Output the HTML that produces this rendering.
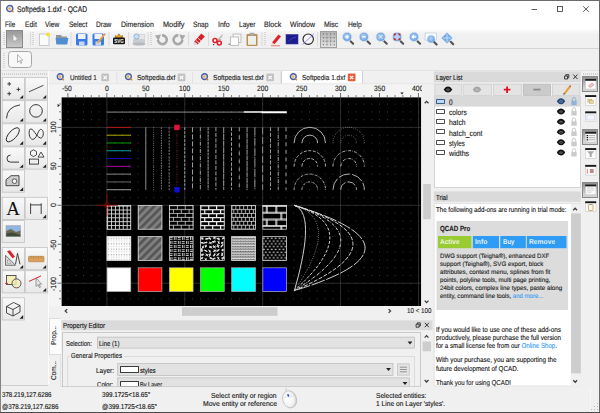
<!DOCTYPE html>
<html><head><meta charset="utf-8"><title>Softpedia 1.dxf - QCAD</title>
<style>
html,body{margin:0;padding:0;background:#f0f0f0;}
body{width:600px;height:413px;overflow:hidden;position:relative;font-family:"Liberation Sans", sans-serif;}
#app{position:absolute;left:0;top:0;width:600px;height:413px;overflow:hidden;}
#app div, #app svg{position:absolute;box-sizing:border-box;}
#app .t{white-space:nowrap;line-height:1;font-family:"Liberation Sans", sans-serif;transform-origin:0 0;text-rendering:geometricPrecision;-webkit-text-stroke:0.12px currentColor;}
#app .b{font-weight:bold;}
#app .r{position:static;}
</style></head><body><div id="app">
<div style="left:0px;top:0px;width:600px;height:413px;background:#f0f0f0"></div>
<div style="left:0px;top:0px;width:600px;height:29px;background:#fff"></div>
<svg style="left:5px;top:4px;" width="10" height="10" viewBox="-0.8 -0.6 10 10"><g transform="scale(0.86)"><circle cx="4.6" cy="4.6" r="3.6" fill="#e4e9f4" stroke="#4a5fa8" stroke-width="1.6"/><circle cx="4.3" cy="4.4" r="1.4" fill="#e8b030"/><path d="M6.5 6.5 L9 9" stroke="#d08a20" stroke-width="1.6"/></g></svg>
<div class="t" style="left:17.1px;top:5.6px;font-size:8.2px;color:#111;transform:scaleX(0.818);">Softpedia 1.dxf - QCAD</div>
<svg style="left:530px;top:0px" width="70" height="18" viewBox="0 0 70 18"><path d="M1.5 9.5 H7" stroke="#333" stroke-width="0.8" fill="none"/><rect x="27.5" y="6.5" width="5" height="5" stroke="#333" stroke-width="0.8" fill="none"/><path d="M53.2 6.3 L58.8 11.9 M58.8 6.3 L53.2 11.9" stroke="#333" stroke-width="0.8" fill="none"/></svg>
<div class="t" style="left:5.3px;top:20.6px;font-size:7.8px;color:#1a1a1a;transform:scaleX(0.811);">File</div>
<div class="t" style="left:24.5px;top:20.6px;font-size:7.8px;color:#1a1a1a;transform:scaleX(0.878);">Edit</div>
<div class="t" style="left:45.3px;top:20.6px;font-size:7.8px;color:#1a1a1a;transform:scaleX(0.847);">View</div>
<div class="t" style="left:68.8px;top:20.6px;font-size:7.8px;color:#1a1a1a;transform:scaleX(0.840);">Select</div>
<div class="t" style="left:96.2px;top:20.6px;font-size:7.8px;color:#1a1a1a;transform:scaleX(0.841);">Draw</div>
<div class="t" style="left:120.7px;top:20.6px;font-size:7.8px;color:#1a1a1a;transform:scaleX(0.890);">Dimension</div>
<div class="t" style="left:163px;top:20.6px;font-size:7.8px;color:#1a1a1a;transform:scaleX(0.936);">Modify</div>
<div class="t" style="left:193px;top:20.6px;font-size:7.8px;color:#1a1a1a;transform:scaleX(0.851);">Snap</div>
<div class="t" style="left:217.7px;top:20.6px;font-size:7.8px;color:#1a1a1a;transform:scaleX(0.891);">Info</div>
<div class="t" style="left:239px;top:20.6px;font-size:7.8px;color:#1a1a1a;transform:scaleX(0.845);">Layer</div>
<div class="t" style="left:264px;top:20.6px;font-size:7.8px;color:#1a1a1a;transform:scaleX(0.907);">Block</div>
<div class="t" style="left:290px;top:20.6px;font-size:7.8px;color:#1a1a1a;transform:scaleX(0.901);">Window</div>
<div class="t" style="left:324px;top:20.6px;font-size:7.8px;color:#1a1a1a;transform:scaleX(0.892);">Misc</div>
<div class="t" style="left:347.7px;top:20.6px;font-size:7.8px;color:#1a1a1a;transform:scaleX(0.860);">Help</div>
<div style="left:0px;top:28.6px;width:600px;height:20.4px;background:linear-gradient(#ffffff,#f6f6f6 12%,#f0f0f0 30%)"></div>
<div style="left:1px;top:48px;width:598px;height:1px;background:#d4d4d4"></div>
<div style="left:6px;top:30px;width:17px;height:18px;background:linear-gradient(#9a9a9a,#c9c9c9);border:0.5px solid #8a8a8a"></div>
<svg style="left:10px;top:33px" width="10" height="12" viewBox="0 0 10 12"><path d="M3 1 L3 9 L5 7.2 L6.3 10 L7.3 9.5 L6 6.8 L8.3 6.8 Z" fill="#f4f4f4" stroke="#999" stroke-width="0.6"/></svg>
<div style="left:3px;top:32px;width:2px;height:14px;background:repeating-linear-gradient(#cdcdcd 0 1px,transparent 1px 2px);opacity:.75"></div>
<div style="left:32px;top:32px;width:2px;height:14px;background:repeating-linear-gradient(#cdcdcd 0 1px,transparent 1px 2px);opacity:.75"></div>
<div style="left:150px;top:32px;width:2px;height:14px;background:repeating-linear-gradient(#cdcdcd 0 1px,transparent 1px 2px);opacity:.75"></div>
<div style="left:264px;top:32px;width:2px;height:14px;background:repeating-linear-gradient(#cdcdcd 0 1px,transparent 1px 2px);opacity:.75"></div>
<div style="left:30px;top:32px;width:1px;height:14px;background:#dadada"></div>
<svg style="left:70px;top:32px" width="2" height="14"><rect x="0.50" y="0.00" width="1.00" height="14.00" fill="#dadada"/></svg>
<svg style="left:108px;top:32px" width="2" height="14"><rect x="0.50" y="0.00" width="1.00" height="14.00" fill="#dadada"/></svg>
<div style="left:128px;top:32px;width:1px;height:14px;background:#dadada"></div>
<svg style="left:147px;top:32px" width="2" height="14"><rect x="0.50" y="0.00" width="1.00" height="14.00" fill="#dadada"/></svg>
<div style="left:188px;top:32px;width:1px;height:14px;background:#dadada"></div>
<div style="left:208px;top:32px;width:1px;height:14px;background:#dadada"></div>
<svg style="left:261px;top:32px" width="2" height="14"><rect x="0.50" y="0.00" width="1.00" height="14.00" fill="#dadada"/></svg>
<div style="left:317px;top:32px;width:1px;height:14px;background:#dadada"></div>
<svg style="left:38px;top:31px;" width="14" height="16" viewBox="0 0 14 16"><rect x="1.5" y="3" width="9.5" height="11.5" fill="#fbfbfb" stroke="#bdbdbd" stroke-width="0.8"/><circle cx="10" cy="3.5" r="2" fill="#f3e233"/></svg>
<svg style="left:54px;top:31px;" width="16" height="16" viewBox="0 0 16 16"><path d="M2 4 H7 L8 5.5 H13 V13 H2 Z" fill="#8f969e"/><path d="M1.5 7 H14.5 L13.2 13.6 H2.6 Z" fill="#4f8fd0"/></svg>
<svg style="left:74px;top:31px;" width="16" height="16" viewBox="0 0 16 16"><rect x="2" y="2.5" width="11.5" height="12" rx="1.5" fill="#3b7be8"/><rect x="4" y="3" width="7.5" height="5" fill="#eef3fb"/><rect x="5" y="10.5" width="5.5" height="4" fill="#c9d7ee"/></svg>
<svg style="left:91px;top:31px;" width="16" height="16" viewBox="0 0 16 16"><rect x="1.5" y="2.5" width="11.5" height="12" rx="1.5" fill="#3b7be8"/><rect x="3.5" y="3" width="7.5" height="5" fill="#eef3fb"/><rect x="4.5" y="10.5" width="5.5" height="4" fill="#c9d7ee"/><path d="M5.5 11.5 L12.5 3 L14 4.3 L7 12.5 Z" fill="#f0a93a"/><path d="M12.5 3 L14 4.3 L14.6 2.5 Z" fill="#e0503a"/></svg>
<svg style="left:111px;top:31px;" width="16" height="16" viewBox="0 0 16 16"><path d="M4.6 7.2 L4.2 4.6 L6 5.4 L7.9 2.8 L9.8 5.4 L11.6 4.6 L11.2 7.2 Z" fill="#f0a010" stroke="#6a4a08" stroke-width="0.5"/><rect x="2" y="6.6" width="12" height="6.6" rx="1.2" fill="#141414"/><text x="8" y="12" font-family="Liberation Sans, sans-serif" font-size="4.6" font-weight="bold" text-anchor="middle" fill="#f4f4f4">SVG</text></svg>
<svg style="left:130px;top:31px;" width="17" height="16" viewBox="0 0 17 16"><rect x="3" y="8" width="12" height="4.5" rx="1" fill="#c9ccd0"/><ellipse cx="9" cy="13" rx="6.5" ry="1.6" fill="#b5b8bd"/><rect x="8.5" y="3.5" width="6" height="5" fill="#e6e8ea" stroke="#c2c5c9" stroke-width="0.5"/><circle cx="6.5" cy="5.5" r="2.6" fill="#cfe0f3" stroke="#8fb3dc" stroke-width="1"/></svg>
<svg style="left:153px;top:31px;" width="17" height="16" viewBox="-0.8 0 17 16"><path d="M4.2 9 A4.4 4.4 0 1 0 8.2 4.4" fill="none" stroke="#a8a8a8" stroke-width="2.6"/><path d="M1.2 4.6 L7.2 3.4 L4.6 10 Z" fill="#a8a8a8"/></svg>
<svg style="left:170px;top:31px;" width="17" height="16" viewBox="-0.5 0 17 16"><path d="M11.8 9 A4.4 4.4 0 1 1 7.8 4.4" fill="none" stroke="#a8a8a8" stroke-width="2.6"/><path d="M14.8 4.6 L8.8 3.4 L11.4 10 Z" fill="#a8a8a8"/></svg>
<svg style="left:191px;top:31px;" width="16" height="16" viewBox="0 0 16 16"><path d="M3.2 10.8 L10.3 2.6 L13.8 5.5 L6.6 13.6 Z" fill="#d8222c"/><path d="M5 9.5 L8 12 M7 7.2 L10 9.8" stroke="#fff" stroke-width="0.7"/><path d="M3.5 11 L6.5 13.2 L3 14 Z" fill="#e9e9e9" stroke="#bbb" stroke-width="0.4"/></svg>
<svg style="left:210px;top:31px;" width="16" height="16" viewBox="0 0 16 16"><path d="M7 9 L13 2.5 L11.5 7 Z" fill="#b9bcc0"/><path d="M8 8 L11 9" stroke="#aaa" stroke-width="1.2"/><circle cx="5" cy="9.5" r="2" fill="none" stroke="#e0222c" stroke-width="1.6"/><circle cx="9.3" cy="12" r="2" fill="none" stroke="#e0222c" stroke-width="1.6"/><rect x="3" y="13" width="1.2" height="1.2" fill="#444"/></svg>
<svg style="left:227px;top:31px;" width="16" height="16" viewBox="0 0 16 16"><rect x="6" y="3" width="8" height="8.5" fill="#f4f4f4" stroke="#b4b4b4" stroke-width="0.8"/><rect x="3.5" y="6" width="8" height="8.5" fill="#fcfcfc" stroke="#b4b4b4" stroke-width="0.8"/><rect x="1.6" y="12.6" width="1.2" height="1.2" fill="#555"/></svg>
<svg style="left:244px;top:31px;" width="16" height="16" viewBox="0 0 16 16"><rect x="2.5" y="3" width="11" height="12" rx="1" fill="#b98f52"/><rect x="4" y="5" width="8" height="8.8" fill="#eeeeea"/><rect x="5.5" y="1.8" width="5" height="3" rx="0.8" fill="#a8a8a8"/></svg>
<svg style="left:268px;top:31px;" width="16" height="16" viewBox="0 0 16 16"><path d="M4 11.5 L10.5 3.5 L13 5.5 L6.5 13.2 Z" fill="#e0222c"/><path d="M4 11.5 L6.5 13.2 L3.2 14.2 Z" fill="#f3d9b0"/><path d="M3 14.8 H12" stroke="#e0222c" stroke-width="0.6"/></svg>
<svg style="left:284px;top:31px;" width="16" height="16" viewBox="0 0 16 16"><rect x="2" y="3.5" width="12" height="9.5" fill="#1c1c8c" stroke="#3a3aa8" stroke-width="0.6"/><path d="M4.5 10.5 Q8 6 12 6.2" stroke="#4a56c8" stroke-width="0.7" fill="none"/></svg>
<svg style="left:300px;top:31px;" width="16" height="16" viewBox="0 0 16 16"><circle cx="8.2" cy="8.2" r="5.2" fill="#f6f6f6" stroke="#222" stroke-width="1.1"/><path d="M2.5 13.5 L14 2.8" stroke="#6a6ae8" stroke-width="0.7"/></svg>
<div style="left:320.3px;top:30.8px;width:17px;height:17px;background:linear-gradient(#b4b4b4,#e2e2e2);border:0.5px solid #a0a0a0"></div>
<svg style="left:320px;top:31px;" width="17" height="17" viewBox="-0.6 -0.2 17 17"><rect x="2.3" y="2.3" width="1" height="1" fill="#555"/><rect x="2.3" y="5.9" width="1" height="1" fill="#555"/><rect x="2.3" y="9.5" width="1" height="1" fill="#555"/><rect x="2.3" y="13.100000000000001" width="1" height="1" fill="#555"/><rect x="5.9" y="2.3" width="1" height="1" fill="#555"/><rect x="5.9" y="5.9" width="1" height="1" fill="#555"/><rect x="5.9" y="9.5" width="1" height="1" fill="#555"/><rect x="5.9" y="13.100000000000001" width="1" height="1" fill="#555"/><rect x="9.5" y="2.3" width="1" height="1" fill="#555"/><rect x="9.5" y="5.9" width="1" height="1" fill="#555"/><rect x="9.5" y="9.5" width="1" height="1" fill="#555"/><rect x="9.5" y="13.100000000000001" width="1" height="1" fill="#555"/><rect x="13.100000000000001" y="2.3" width="1" height="1" fill="#555"/><rect x="13.100000000000001" y="5.9" width="1" height="1" fill="#555"/><rect x="13.100000000000001" y="9.5" width="1" height="1" fill="#555"/><rect x="13.100000000000001" y="13.100000000000001" width="1" height="1" fill="#555"/><path d="M2.8 6.4 H14 M2.8 10 H14 M6.4 2.8 V14 M10 2.8 V14" stroke="#999" stroke-width="0.4"/></svg>
<svg style="left:0;top:0" width="0" height="0"><defs><radialGradient id="lens" cx="0.45" cy="0.4" r="0.65"><stop offset="0" stop-color="#b4d2f4"/><stop offset="1" stop-color="#66a0e0"/></radialGradient></defs></svg>
<svg style="left:340px;top:31px;" width="17" height="16" viewBox="-0.6 0 17 16"><path d="M10 10.2 L12.6 12.7" stroke="#505050" stroke-width="2" stroke-linecap="round"/><circle cx="6.5" cy="5.9" r="4.1" fill="url(#lens)" stroke="#6a9cd8" stroke-width="0.6"/><circle cx="6.5" cy="5.9" r="4.7" fill="none" stroke="#d4e2f4" stroke-width="0.6"/><path d="M4.5 5.9 H8.5 M6.5 3.9 V7.9" stroke="#fff" stroke-width="1.2"/></svg>
<svg style="left:357px;top:31px;" width="17" height="16" viewBox="-0.4 0 17 16"><path d="M10 10.2 L12.6 12.7" stroke="#505050" stroke-width="2" stroke-linecap="round"/><circle cx="6.5" cy="5.9" r="4.1" fill="url(#lens)" stroke="#6a9cd8" stroke-width="0.6"/><circle cx="6.5" cy="5.9" r="4.7" fill="none" stroke="#d4e2f4" stroke-width="0.6"/><path d="M4.5 5.9 H8.5" stroke="#fff" stroke-width="1.2"/></svg>
<svg style="left:374px;top:31px;" width="17" height="16" viewBox="-0.2 0 17 16"><path d="M10 10.2 L12.6 12.7" stroke="#505050" stroke-width="2" stroke-linecap="round"/><circle cx="6.5" cy="5.9" r="4.1" fill="url(#lens)" stroke="#6a9cd8" stroke-width="0.6"/><circle cx="6.5" cy="5.9" r="4.7" fill="none" stroke="#d4e2f4" stroke-width="0.6"/><path d="M4.6 4 L8.4 7.8 M8.4 4 L4.6 7.8" stroke="#e4effc" stroke-width="0.9"/></svg>
<svg style="left:390px;top:31px;" width="17" height="16" viewBox="-0.6 0 17 16"><path d="M10 10.2 L12.6 12.7" stroke="#505050" stroke-width="2" stroke-linecap="round"/><circle cx="6.5" cy="5.9" r="4.1" fill="url(#lens)" stroke="#6a9cd8" stroke-width="0.6"/><circle cx="6.5" cy="5.9" r="4.7" fill="none" stroke="#d4e2f4" stroke-width="0.6"/><rect x="3.9" y="3.3" width="5.2" height="5.2" fill="#b4d2f4" stroke="#c8202a" stroke-width="1.5" stroke-dasharray="2.6 2.6" stroke-dashoffset="1.3"/></svg>
<svg style="left:407px;top:31px;" width="17" height="16" viewBox="-0.5 0 17 16"><path d="M10 10.2 L12.6 12.7" stroke="#505050" stroke-width="2" stroke-linecap="round"/><circle cx="6.5" cy="5.9" r="4.1" fill="url(#lens)" stroke="#6a9cd8" stroke-width="0.6"/><circle cx="6.5" cy="5.9" r="4.7" fill="none" stroke="#d4e2f4" stroke-width="0.6"/><path d="M4.4 5.9 H8.8 M4.4 5.9 L6.2 4.4 M4.4 5.9 L6.2 7.4" stroke="#fff" stroke-width="1.2" fill="none"/></svg>
<svg style="left:423px;top:31px;" width="19" height="16" viewBox="-0.6 0 19 16"><rect x="1.5" y="2" width="11.5" height="7" fill="#fcfcfc" stroke="#a9c1e6" stroke-width="0.6"/><path d="M10.5 11 L13 13.5" stroke="#555" stroke-width="2.2" stroke-linecap="round"/><circle cx="7.5" cy="8" r="3.8" fill="url(#lens)"/></svg>
<svg style="left:440px;top:31px;" width="18" height="16" viewBox="0 0 18 16"><path d="M10.8 10.8 L13.2 13.2" stroke="#555" stroke-width="2.2" stroke-linecap="round"/><path d="M7 1.4 L12.6 7 L7 12.6 L1.4 7 Z" fill="#74abe8"/><path d="M7 3 V11 M3 7 H11" stroke="#d6e6fa" stroke-width="0.8"/></svg>
<div style="left:3px;top:53px;width:2px;height:15px;background:repeating-linear-gradient(#cdcdcd 0 1px,transparent 1px 2px);opacity:.75"></div>
<div style="left:8px;top:51px;width:23.5px;height:17px;background:#f8f8f8;border:1px solid #a6a6a6;border-radius:3.5px"></div>
<svg style="left:14px;top:53px" width="11" height="13" viewBox="-0.5 -0.5 11 13"><path d="M3 1 L3 9 L5 7.2 L6.3 10 L7.3 9.5 L6 6.8 L8.3 6.8 Z" fill="#fdfdfd" stroke="#9a9a9a" stroke-width="0.7"/></svg>
<div style="left:1px;top:70px;width:47.8px;height:316.3px;background:#efefef;border-right:0.7px solid #fdfdfd;border-bottom:0.6px solid #cfcfcf"></div>
<div style="left:2px;top:73px;width:45px;height:2px;background:repeating-linear-gradient(90deg,#c8c8c8 0 1px,transparent 1px 2px);opacity:.8"></div>
<svg style="left:0;top:0" width="0" height="0"><defs><linearGradient id="tbg" x1="0" y1="0" x2="0" y2="1"><stop offset="0" stop-color="#f9f9f9"/><stop offset="1" stop-color="#e8e8e8"/></linearGradient></defs></svg>
<svg style="left:1px;top:77px;" width="24" height="24" viewBox="-0.8 -0.2 24 24"><g transform="translate(0.2 0.1)"><rect x="0.2" y="0.3" width="22.2" height="22.2" fill="url(#tbg)" stroke="#c2c2c2" stroke-width="0.8"/><path d="M5.300000000000001 6.6 H9.1 M7.2 4.699999999999999 V8.5" stroke="#222" stroke-width="0.85" fill="none"/><path d="M14.499999999999998 12.1 H18.299999999999997 M16.4 10.2 V14.0" stroke="#222" stroke-width="0.85" fill="none"/><path d="M5.300000000000001 16.4 H9.1 M7.2 14.499999999999998 V18.299999999999997" stroke="#222" stroke-width="0.85" fill="none"/><path d="M21.2 17.6 V21.2 H17.6 Z" fill="#222"/></g></svg>
<svg style="left:24px;top:77px;" width="24" height="24" viewBox="-0.8 -0.2 24 24"><g transform="translate(0.2 0.1)"><rect x="0.2" y="0.3" width="22.2" height="22.2" fill="url(#tbg)" stroke="#c2c2c2" stroke-width="0.8"/><path d="M4 14.5 L18.5 8" stroke="#222" stroke-width="0.8" fill="none"/><path d="M21.2 17.6 V21.2 H17.6 Z" fill="#222"/></g></svg>
<svg style="left:1px;top:100px;" width="24" height="24" viewBox="-0.8 -0.3 24 24"><g transform="translate(0.2 0.1)"><rect x="0.2" y="0.3" width="22.2" height="22.2" fill="url(#tbg)" stroke="#c2c2c2" stroke-width="0.8"/><path d="M4.5 18 Q5 6.5 18 4.5" stroke="#222" stroke-width="0.9" fill="none"/><path d="M21.2 17.6 V21.2 H17.6 Z" fill="#222"/></g></svg>
<svg style="left:24px;top:100px;" width="24" height="24" viewBox="-0.8 -0.3 24 24"><g transform="translate(0.2 0.1)"><rect x="0.2" y="0.3" width="22.2" height="22.2" fill="url(#tbg)" stroke="#c2c2c2" stroke-width="0.8"/><circle cx="11" cy="10.5" r="6.3" stroke="#222" stroke-width="0.9" fill="none"/><path d="M21.2 17.6 V21.2 H17.6 Z" fill="#222"/></g></svg>
<svg style="left:1px;top:123px;" width="24" height="24" viewBox="-0.8 -0.4 24 24"><g transform="translate(0.2 0.1)"><rect x="0.2" y="0.3" width="22.2" height="22.2" fill="url(#tbg)" stroke="#c2c2c2" stroke-width="0.8"/><ellipse cx="10.8" cy="11.3" rx="8.8" ry="3.9" transform="rotate(-48 10.8 11.3)" stroke="#222" stroke-width="0.9" fill="none"/><path d="M21.2 17.6 V21.2 H17.6 Z" fill="#222"/></g></svg>
<svg style="left:24px;top:123px;" width="24" height="24" viewBox="-0.8 -0.4 24 24"><g transform="translate(0.2 0.1)"><rect x="0.2" y="0.3" width="22.2" height="22.2" fill="url(#tbg)" stroke="#c2c2c2" stroke-width="0.8"/><path d="M4.6 6 C3 11 5.5 17.5 9 15.5 C12.5 13.5 13.5 4.5 16.5 6 C19.5 7.5 18.5 15 15.5 14.5 C11 13.5 8 3 4.6 6 Z" stroke="#222" stroke-width="0.9" fill="none"/><path d="M21.2 17.6 V21.2 H17.6 Z" fill="#222"/></g></svg>
<svg style="left:1px;top:146px;" width="24" height="24" viewBox="-0.8 -0.5 24 24"><g transform="translate(0.2 0.1)"><rect x="0.2" y="0.3" width="22.2" height="22.2" fill="url(#tbg)" stroke="#c2c2c2" stroke-width="0.8"/><path d="M17 15.5 H8.5 Q5 15.5 5 12 Q5 8.5 8.5 8.5" stroke="#222" stroke-width="0.9" fill="none"/><path d="M21.2 17.6 V21.2 H17.6 Z" fill="#222"/></g></svg>
<svg style="left:24px;top:146px;" width="24" height="24" viewBox="-0.8 -0.5 24 24"><g transform="translate(0.2 0.1)"><rect x="0.2" y="0.3" width="22.2" height="22.2" fill="url(#tbg)" stroke="#c2c2c2" stroke-width="0.8"/><path d="M5.5 5 L8.5 3.2 L11.5 5 V8.2 L8.5 10 L5.5 8.2 Z M13 10.5 L16 5.5 L19 10.5 Z" stroke="#222" stroke-width="0.8" fill="none"/><rect x="4.5" y="12.5" width="9" height="5" stroke="#222" stroke-width="0.8" fill="none"/><path d="M21.2 17.6 V21.2 H17.6 Z" fill="#222"/></g></svg>
<svg style="left:1px;top:169px;" width="24" height="24" viewBox="-0.8 -0.6 24 24"><g transform="translate(0.2 0.1)"><rect x="0.2" y="0.3" width="22.2" height="22.2" fill="url(#tbg)" stroke="#c2c2c2" stroke-width="0.8"/><path d="M4 16 V10 L9 6 H17 V16 Z" stroke="#222" stroke-width="0.8" fill="#d4d4d4"/><path d="M4.5 12 L9.5 7 M4.5 15 L12 7.5 M7 16 L15 8 M10 16 L17 9 M13 16 L17 12" stroke="#8a8a8a" stroke-width="0.4"/><circle cx="12.5" cy="11.5" r="2.3" fill="#f6f6f6" stroke="#222" stroke-width="0.7"/><path d="M21.2 17.6 V21.2 H17.6 Z" fill="#222"/></g></svg>
<svg style="left:1px;top:196px;" width="24" height="24" viewBox="-0.8 -0.9 24 24"><g transform="translate(0.2 0.1)"><rect x="0.2" y="0.3" width="22.2" height="22.2" fill="url(#tbg)" stroke="#c2c2c2" stroke-width="0.8"/><text x="11.2" y="18" font-family="Liberation Serif, serif" font-size="19" text-anchor="middle" fill="#111">A</text></g></svg>
<svg style="left:24px;top:196px;" width="24" height="24" viewBox="-0.8 -0.9 24 24"><g transform="translate(0.2 0.1)"><rect x="0.2" y="0.3" width="22.2" height="22.2" fill="url(#tbg)" stroke="#c2c2c2" stroke-width="0.8"/><path d="M5.6 17 V6.3 M16.2 17 V6.3 M5.6 7.9 H16.2" stroke="#222" stroke-width="0.85" fill="none"/><path d="M21.2 17.6 V21.2 H17.6 Z" fill="#222"/></g></svg>
<svg style="left:1px;top:220px;" width="24" height="23" viewBox="-0.8 -0 24 23"><g transform="translate(0.2 0.1)"><rect x="0.2" y="0.3" width="22.2" height="22.2" fill="url(#tbg)" stroke="#c2c2c2" stroke-width="0.8"/><rect x="4" y="5.5" width="14.5" height="11" fill="#8fb6e0"/><path d="M4 16.5 V11 L9 9 L14 12 L18.5 10.5 V16.5 Z" fill="#6d6a55"/><path d="M4 16.5 V13.5 L10 12.5 L18.5 15 V16.5 Z" fill="#3f4a3a"/><rect x="4" y="5.5" width="14.5" height="11" fill="none" stroke="#999" stroke-width="0.5"/></g></svg>
<svg style="left:1px;top:247px;" width="24" height="24" viewBox="-0.8 -0.2 24 24"><g transform="translate(0.2 0.1)"><rect x="0.2" y="0.3" width="22.2" height="22.2" fill="url(#tbg)" stroke="#c2c2c2" stroke-width="0.8"/><path d="M3.5 18 L3.5 8 L13.5 18 Z" fill="#d9d9d9" stroke="#555" stroke-width="0.8"/><path d="M5.5 16 V12.5 L9 16 Z" fill="#f3f3f3" stroke="#777" stroke-width="0.5"/><path d="M15.5 6 L13.5 17 M15.5 6 L18 17" stroke="#333" stroke-width="0.9" fill="none"/><path d="M5 4 L8 3 L13 9.5 L10.5 11 Z" fill="#d8222c"/><path d="M21.2 17.6 V21.2 H17.6 Z" fill="#222"/></g></svg>
<svg style="left:24px;top:247px;" width="24" height="24" viewBox="-0.8 -0.2 24 24"><g transform="translate(0.2 0.1)"><rect x="0.2" y="0.3" width="22.2" height="22.2" fill="url(#tbg)" stroke="#c2c2c2" stroke-width="0.8"/><rect x="3.5" y="9" width="15.5" height="5.5" rx="0.8" fill="#d9a15c" stroke="#b07a38" stroke-width="0.6"/><path d="M6 9 v2 M8.5 9 v2 M11 9 v2 M13.5 9 v2 M16 9 v2" stroke="#8a5a20" stroke-width="0.4"/><path d="M21.2 17.6 V21.2 H17.6 Z" fill="#222"/></g></svg>
<svg style="left:1px;top:270px;" width="24" height="24" viewBox="-0.8 -0.3 24 24"><g transform="translate(0.2 0.1)"><rect x="0.2" y="0.3" width="22.2" height="22.2" fill="url(#tbg)" stroke="#c2c2c2" stroke-width="0.8"/><rect x="4.5" y="5" width="9.5" height="9" fill="#f3eebb" stroke="#333" stroke-width="0.8"/><circle cx="14.5" cy="13" r="4.5" fill="#f3eebb" fill-opacity="0.8" stroke="#333" stroke-width="0.8"/><path d="M3 13 h3" stroke="#d22" stroke-width="0.9"/></g></svg>
<svg style="left:24px;top:270px;" width="24" height="24" viewBox="-0.8 -0.3 24 24"><g transform="translate(0.2 0.1)"><rect x="0.2" y="0.3" width="22.2" height="22.2" fill="url(#tbg)" stroke="#c2c2c2" stroke-width="0.8"/><path d="M4 11 L16 5.5" stroke="#d8222c" stroke-width="1"/><path d="M11 7.5 L11 16 L13 14.2 L14.4 17.2 L15.5 16.7 L14.1 13.8 L16.6 13.8 Z" fill="#e9e9e9" stroke="#777" stroke-width="0.7"/><path d="M21.2 17.6 V21.2 H17.6 Z" fill="#222"/></g></svg>
<svg style="left:1px;top:297px;" width="24" height="24" viewBox="-0.8 -0.4 24 24"><g transform="translate(0.2 0.1)"><rect x="0.2" y="0.3" width="22.2" height="22.2" fill="url(#tbg)" stroke="#c2c2c2" stroke-width="0.8"/><path d="M4.5 9 L11.5 5 L18 8 L18 14.5 L11 18.5 L4.5 15.5 Z M4.5 9 L11 12 L18 8 M11 12 V18.5" stroke="#222" stroke-width="0.8" fill="none"/><path d="M21.2 17.6 V21.2 H17.6 Z" fill="#222"/></g></svg>
<div style="left:49px;top:70px;width:385px;height:14px;background:#f0f0f0"></div>
<svg style="left:1px;top:70px" width="598" height="1"><rect x="0.00" y="0.20" width="598.00" height="0.70" fill="#dcdcdc"/></svg>
<svg style="left:116px;top:72px" width="2" height="11"><rect x="0.50" y="0.00" width="0.70" height="11.00" fill="#dcdcdc"/></svg>
<svg style="left:56px;top:73px;" width="9" height="8" viewBox="-0.5 0 9 8"><circle cx="3.7" cy="3.6" r="2.9" fill="#e4e9f4" stroke="#4a5fa8" stroke-width="1.4"/><circle cx="3.5" cy="3.5" r="1.2" fill="#e8b030"/><path d="M5.6 5.6 L7.3 7.3" stroke="#d08a20" stroke-width="1.4"/></svg>
<div class="t" style="left:70px;top:74.3px;font-size:7.3px;color:#222;transform:scaleX(0.866);">Untitled 1</div>
<svg style="left:101px;top:73px;" width="9" height="9" viewBox="-0.1 -0.4 9 9"><rect x="0.2" y="0.2" width="7.7" height="7.7" rx="1.1" fill="#c2c2c2"/><path d="M2.4 2.4 L5.7 5.7 M5.7 2.4 L2.4 5.7" stroke="#fff" stroke-width="1.15"/></svg>
<svg style="left:192px;top:72px" width="1" height="11"><rect x="0.00" y="0.00" width="0.70" height="11.00" fill="#dcdcdc"/></svg>
<svg style="left:124px;top:73px;" width="9" height="8" viewBox="-0.7 0 9 8"><circle cx="3.7" cy="3.6" r="2.9" fill="#e4e9f4" stroke="#4a5fa8" stroke-width="1.4"/><circle cx="3.5" cy="3.5" r="1.2" fill="#e8b030"/><path d="M5.6 5.6 L7.3 7.3" stroke="#d08a20" stroke-width="1.4"/></svg>
<div class="t" style="left:136.6px;top:74.3px;font-size:7.3px;color:#222;transform:scaleX(0.897);">Softpedia.dxf</div>
<svg style="left:177px;top:73px;" width="9" height="9" viewBox="-0.5 -0.4 9 9"><rect x="0.2" y="0.2" width="7.7" height="7.7" rx="1.1" fill="#c2c2c2"/><path d="M2.4 2.4 L5.7 5.7 M5.7 2.4 L2.4 5.7" stroke="#fff" stroke-width="1.15"/></svg>
<svg style="left:280px;top:72px" width="2" height="11"><rect x="0.50" y="0.00" width="0.70" height="11.00" fill="#dcdcdc"/></svg>
<svg style="left:200px;top:73px;" width="9" height="8" viewBox="-0.8 0 9 8"><circle cx="3.7" cy="3.6" r="2.9" fill="#e4e9f4" stroke="#4a5fa8" stroke-width="1.4"/><circle cx="3.5" cy="3.5" r="1.2" fill="#e8b030"/><path d="M5.6 5.6 L7.3 7.3" stroke="#d08a20" stroke-width="1.4"/></svg>
<div class="t" style="left:213px;top:74.3px;font-size:7.3px;color:#222;transform:scaleX(0.899);">Softpedia test.dxf</div>
<svg style="left:266px;top:73px;" width="9" height="9" viewBox="-0.1 -0.4 9 9"><rect x="0.2" y="0.2" width="7.7" height="7.7" rx="1.1" fill="#c2c2c2"/><path d="M2.4 2.4 L5.7 5.7 M5.7 2.4 L2.4 5.7" stroke="#fff" stroke-width="1.15"/></svg>
<div style="left:281px;top:70.5px;width:81.5px;height:13.5px;background:#fff;border-left:0.6px solid #d0d0d0;border-right:0.6px solid #d0d0d0"></div>
<svg style="left:289px;top:73px;" width="9" height="8" viewBox="-0.6 0 9 8"><circle cx="3.7" cy="3.6" r="2.9" fill="#e4e9f4" stroke="#4a5fa8" stroke-width="1.4"/><circle cx="3.5" cy="3.5" r="1.2" fill="#e8b030"/><path d="M5.6 5.6 L7.3 7.3" stroke="#d08a20" stroke-width="1.4"/></svg>
<div class="t" style="left:302.3px;top:74.3px;font-size:7.3px;color:#222;transform:scaleX(0.887);">Softpedia 1.dxf</div>
<svg style="left:347px;top:73px;" width="9" height="9" viewBox="-0.6 -0.4 9 9"><rect x="0.2" y="0.2" width="7.7" height="7.7" rx="1.1" fill="#e85c34"/><path d="M2.4 2.4 L5.7 5.7 M5.7 2.4 L2.4 5.7" stroke="#fff" stroke-width="1.15"/></svg>
<svg style="left:49px;top:83px" width="373" height="15"><rect x="0.00" y="0.70" width="372.40" height="13.50" fill="#f4f4f4"/></svg>
<svg style="left:49px;top:83px" width="385" height="2"><rect x="0.00" y="0.50" width="385.00" height="0.60" fill="#e0e0e0"/></svg>
<svg style="left:48px;top:97px" width="14" height="209"><rect x="0.60" y="0.00" width="12.80" height="209.00" fill="#f4f4f4"/></svg>
<svg style="left:0px;top:0px;" width="600" height="413" viewBox="0 0 600 413"><path d="M67.90 93 V97" stroke="#333" stroke-width="0.7"/><path d="M75.69 95 V97" stroke="#333" stroke-width="0.6"/><path d="M83.48 95 V97" stroke="#333" stroke-width="0.6"/><path d="M91.27 95 V97" stroke="#333" stroke-width="0.6"/><path d="M99.06 95 V97" stroke="#333" stroke-width="0.6"/><path d="M106.85 93 V97" stroke="#333" stroke-width="0.7"/><path d="M114.64 95 V97" stroke="#333" stroke-width="0.6"/><path d="M122.43 95 V97" stroke="#333" stroke-width="0.6"/><path d="M130.22 95 V97" stroke="#333" stroke-width="0.6"/><path d="M138.01 95 V97" stroke="#333" stroke-width="0.6"/><path d="M145.80 93 V97" stroke="#333" stroke-width="0.7"/><path d="M153.59 95 V97" stroke="#333" stroke-width="0.6"/><path d="M161.38 95 V97" stroke="#333" stroke-width="0.6"/><path d="M169.17 95 V97" stroke="#333" stroke-width="0.6"/><path d="M176.96 95 V97" stroke="#333" stroke-width="0.6"/><path d="M184.75 93 V97" stroke="#333" stroke-width="0.7"/><path d="M192.54 95 V97" stroke="#333" stroke-width="0.6"/><path d="M200.33 95 V97" stroke="#333" stroke-width="0.6"/><path d="M208.12 95 V97" stroke="#333" stroke-width="0.6"/><path d="M215.91 95 V97" stroke="#333" stroke-width="0.6"/><path d="M223.70 93 V97" stroke="#333" stroke-width="0.7"/><path d="M231.49 95 V97" stroke="#333" stroke-width="0.6"/><path d="M239.28 95 V97" stroke="#333" stroke-width="0.6"/><path d="M247.07 95 V97" stroke="#333" stroke-width="0.6"/><path d="M254.86 95 V97" stroke="#333" stroke-width="0.6"/><path d="M262.65 93 V97" stroke="#333" stroke-width="0.7"/><path d="M270.44 95 V97" stroke="#333" stroke-width="0.6"/><path d="M278.23 95 V97" stroke="#333" stroke-width="0.6"/><path d="M286.02 95 V97" stroke="#333" stroke-width="0.6"/><path d="M293.81 95 V97" stroke="#333" stroke-width="0.6"/><path d="M301.60 93 V97" stroke="#333" stroke-width="0.7"/><path d="M309.39 95 V97" stroke="#333" stroke-width="0.6"/><path d="M317.18 95 V97" stroke="#333" stroke-width="0.6"/><path d="M324.97 95 V97" stroke="#333" stroke-width="0.6"/><path d="M332.76 95 V97" stroke="#333" stroke-width="0.6"/><path d="M340.55 93 V97" stroke="#333" stroke-width="0.7"/><path d="M348.34 95 V97" stroke="#333" stroke-width="0.6"/><path d="M356.13 95 V97" stroke="#333" stroke-width="0.6"/><path d="M363.92 95 V97" stroke="#333" stroke-width="0.6"/><path d="M371.71 95 V97" stroke="#333" stroke-width="0.6"/><path d="M379.50 93 V97" stroke="#333" stroke-width="0.7"/><path d="M387.29 95 V97" stroke="#333" stroke-width="0.6"/><path d="M395.08 95 V97" stroke="#333" stroke-width="0.6"/><path d="M402.87 95 V97" stroke="#333" stroke-width="0.6"/><path d="M410.66 95 V97" stroke="#333" stroke-width="0.6"/><path d="M418.45 93 V97" stroke="#333" stroke-width="0.7"/><path d="M59 104.03 H61" stroke="#333" stroke-width="0.6"/><path d="M59 111.82 H61" stroke="#333" stroke-width="0.6"/><path d="M59 119.61 H61" stroke="#333" stroke-width="0.6"/><path d="M57.5 127.40 H61" stroke="#333" stroke-width="0.7"/><path d="M59 135.19 H61" stroke="#333" stroke-width="0.6"/><path d="M59 142.98 H61" stroke="#333" stroke-width="0.6"/><path d="M59 150.77 H61" stroke="#333" stroke-width="0.6"/><path d="M59 158.56 H61" stroke="#333" stroke-width="0.6"/><path d="M57.5 166.35 H61" stroke="#333" stroke-width="0.7"/><path d="M59 174.14 H61" stroke="#333" stroke-width="0.6"/><path d="M59 181.93 H61" stroke="#333" stroke-width="0.6"/><path d="M59 189.72 H61" stroke="#333" stroke-width="0.6"/><path d="M59 197.51 H61" stroke="#333" stroke-width="0.6"/><path d="M57.5 205.30 H61" stroke="#333" stroke-width="0.7"/><path d="M59 213.09 H61" stroke="#333" stroke-width="0.6"/><path d="M59 220.88 H61" stroke="#333" stroke-width="0.6"/><path d="M59 228.67 H61" stroke="#333" stroke-width="0.6"/><path d="M59 236.46 H61" stroke="#333" stroke-width="0.6"/><path d="M57.5 244.25 H61" stroke="#333" stroke-width="0.7"/><path d="M59 252.04 H61" stroke="#333" stroke-width="0.6"/><path d="M59 259.83 H61" stroke="#333" stroke-width="0.6"/><path d="M59 267.62 H61" stroke="#333" stroke-width="0.6"/><path d="M59 275.41 H61" stroke="#333" stroke-width="0.6"/><path d="M57.5 283.20 H61" stroke="#333" stroke-width="0.7"/><path d="M59 290.99 H61" stroke="#333" stroke-width="0.6"/><path d="M59 298.78 H61" stroke="#333" stroke-width="0.6"/><path d="M400.4 92.4 h3.2 l-1.6 2.2 Z" fill="#111"/><path d="M57.6 103.9 v3.2 l2.2 -1.6 Z" fill="#111"/></svg>
<div class="t" style="left:62px;top:85.2px;font-size:7.7px;color:#222;transform:scaleX(0.881);">-50</div>
<div class="t" style="left:104.55px;top:85.2px;font-size:7.7px;color:#222;transform:scaleX(0.888);">0</div>
<div class="t" style="left:141.7px;top:85.2px;font-size:7.7px;color:#222;transform:scaleX(0.864);">50</div>
<div class="t" style="left:178.75px;top:85.2px;font-size:7.7px;color:#222;transform:scaleX(0.873);">100</div>
<div class="t" style="left:217.7px;top:85.2px;font-size:7.7px;color:#222;transform:scaleX(0.873);">150</div>
<div class="t" style="left:256.65px;top:85.2px;font-size:7.7px;color:#222;transform:scaleX(0.873);">200</div>
<div class="t" style="left:295.6px;top:85.2px;font-size:7.7px;color:#222;transform:scaleX(0.873);">250</div>
<div class="t" style="left:334.55px;top:85.2px;font-size:7.7px;color:#222;transform:scaleX(0.873);">300</div>
<div class="t" style="left:373.5px;top:85.2px;font-size:7.7px;color:#222;transform:scaleX(0.873);">350</div>
<div style="left:49px;top:83px;width:372.6px;height:13px;overflow:hidden"><div class="t" style="left:363.45px;top:2.2px;font-size:7.7px;color:#222;transform:scaleX(0.9)">400</div></div>
<div class="t" style="left:49.9px;top:133.00px;font-size:7.7px;color:#222;transform:rotate(-90deg) scaleX(0.9);transform-origin:0 0;">100</div>
<div class="t" style="left:49.9px;top:170.05px;font-size:7.7px;color:#222;transform:rotate(-90deg) scaleX(0.9);transform-origin:0 0;">50</div>
<div class="t" style="left:49.9px;top:207.20px;font-size:7.7px;color:#222;transform:rotate(-90deg) scaleX(0.9);transform-origin:0 0;">0</div>
<div class="t" style="left:49.9px;top:249.75px;font-size:7.7px;color:#222;transform:rotate(-90deg) scaleX(0.9);transform-origin:0 0;">-50</div>
<div class="t" style="left:49.9px;top:290.60px;font-size:7.7px;color:#222;transform:rotate(-90deg) scaleX(0.9);transform-origin:0 0;">-100</div>
<svg style="left:0px;top:0px" width="600" height="413" viewBox="0 0 600 413"><defs><clipPath id="cv"><rect x="61.4" y="97.2" width="360.00" height="208.80"/></clipPath></defs><g clip-path="url(#cv)"><rect x="61.4" y="97.2" width="360.0" height="208.8" fill="#000"/><defs><pattern id="gd" x="106.45" y="204.90" width="7.790" height="7.790" patternUnits="userSpaceOnUse"><rect x="0" y="0" width="0.8" height="0.8" fill="#5a5a5a"/></pattern><pattern id="h_grid" x="0.4" y="0.4" width="3.9" height="3.9" patternUnits="userSpaceOnUse"><rect width="3.9" height="3.9" fill="#000"/><path d="M0 0.45 H3.9 M0.45 0 V3.9" stroke="#dcdcdc" stroke-width="0.95"/></pattern><pattern id="h_diag" width="5.6" height="5.6" patternUnits="userSpaceOnUse" patternTransform="rotate(-45)"><rect width="5.6" height="5.6" fill="#767676"/><rect y="0" width="5.6" height="2.4" fill="#545454"/><path d="M0 3.9 H5.6" stroke="#8a8a8a" stroke-width="0.9"/></pattern><pattern id="h_brick" width="7.85" height="7.85" patternUnits="userSpaceOnUse"><rect width="7.85" height="7.85" fill="#000"/><path d="M0 0.4 H7.85 M0 4.33 H7.85 M0.4 0 V4.33 M4.33 4.33 V7.85" stroke="#d6d6d6" stroke-width="0.8"/></pattern><pattern id="h_brick2" width="7.9" height="7.9" patternUnits="userSpaceOnUse"><rect width="7.9" height="7.9" fill="#000"/><path d="M0 0.6 H7.9 M0 4.55 H7.9 M0.6 0 V4.55 M4.55 4.55 V7.9" stroke="#f0f0f0" stroke-width="1.25"/></pattern><pattern id="h_brick3" width="3.93" height="7.85" patternUnits="userSpaceOnUse"><rect width="3.93" height="7.85" fill="#000"/><path d="M0 0.4 H3.93 M0 4.33 H3.93 M0.4 0 V4.33 M2.36 4.33 V7.85" stroke="#e0e0e0" stroke-width="0.8"/></pattern><pattern id="h_brick4" width="15.8" height="11.8" patternUnits="userSpaceOnUse"><rect width="15.8" height="11.8" fill="#000"/><path d="M0 0.9 H15.8 M0 6.8 H15.8 M3 0 V6.8 M11 6.8 V11.8" stroke="#e0e0e0" stroke-width="1.9"/><path d="M0 0.9 H15.8 M0 6.8 H15.8 M3 0 V6.8 M11 6.8 V11.8" stroke="#555" stroke-width="0.5"/></pattern><pattern id="h_dots" x="0.6" y="0.5" width="2.6" height="5.4" patternUnits="userSpaceOnUse"><rect width="2.6" height="5.4" fill="#fbfbfb"/><rect x="0.9" y="0.9" width="0.9" height="1.3" fill="#a4a4a4"/><rect x="0.9" y="3.6" width="0.9" height="1" fill="#d4d4d4"/></pattern><pattern id="h_weave" width="7.85" height="7.85" patternUnits="userSpaceOnUse"><rect width="7.85" height="7.85" fill="#000"/><path d="M0.2 0.9 H3.7 M0.2 2.7 H3.7 M4.1 4.8 H7.6 M4.1 6.6 H7.6 M4.9 0.2 V3.7 M6.7 0.2 V3.7 M0.9 4.1 V7.6 M2.7 4.1 V7.6" stroke="#f4f4f4" stroke-width="1"/></pattern><pattern id="h_stars" width="7.85" height="7.85" patternUnits="userSpaceOnUse"><rect width="7.85" height="7.85" fill="#0c0c0c"/><path d="M0.4 2 L3.6 2 M2 0.4 L2 3.6 M0.9 0.9 L3.1 3.1 M3.1 0.9 L0.9 3.1 M4.3 6 L7.5 6 M6 4.3 L6 7.5 M4.9 4.9 L7.1 7.1 M7.1 4.9 L4.9 7.1 M4.5 1 L6 2.6 M6.6 0.6 L5.4 3 M7.4 2 L4.6 2.4 M0.6 5 L3.2 6.8 M2.6 4.4 L1 7.4 M0.4 6.4 L3.4 5.4 M3.6 3.8 L4.4 4.4 M7.4 3.6 L7.85 4" stroke="#f6f6f6" stroke-width="0.85"/></pattern><pattern id="h_zig" width="2.6" height="2.6" patternUnits="userSpaceOnUse"><rect width="2.6" height="2.6" fill="#8a8a8a"/><path d="M0 0.6 L0.65 1.6 L1.3 0.6 L1.95 1.6 L2.6 0.6" stroke="#f0f0f0" stroke-width="0.8" fill="none"/><rect x="0.9" y="2" width="0.7" height="0.5" fill="#222"/></pattern><pattern id="h_tri" x="0.3" y="0.6" width="3.93" height="5.6" patternUnits="userSpaceOnUse"><rect width="3.93" height="5.6" fill="#000"/><circle cx="1" cy="1.2" r="0.8" fill="#ececec"/><circle cx="2.97" cy="4" r="0.8" fill="#ececec"/></pattern></defs><rect x="61.4" y="97.2" width="360.0" height="208.8" fill="url(#gd)"/><path d="M106.85 97.2 V306" stroke="#3c3c3c" stroke-width="0.7"/><path d="M184.75 97.2 V306" stroke="#3c3c3c" stroke-width="0.7"/><path d="M262.65 97.2 V306" stroke="#3c3c3c" stroke-width="0.7"/><path d="M340.55 97.2 V306" stroke="#3c3c3c" stroke-width="0.7"/><path d="M418.45 97.2 V306" stroke="#3c3c3c" stroke-width="0.7"/><path d="M61.4 283.20 H421.4" stroke="#3c3c3c" stroke-width="0.7"/><path d="M61.4 205.30 H421.4" stroke="#3c3c3c" stroke-width="0.7"/><path d="M61.4 127.40 H421.4" stroke="#3c3c3c" stroke-width="0.7"/><path d="M106.85 112.1 H244" stroke="#9a9a9a" stroke-width="0.9"/><path d="M243.8 112.1 H262" stroke="#fff" stroke-width="1.5"/><path d="M261.5 112.19999999999999 H286.8" stroke="#fff" stroke-width="2.1"/><path d="M106.85 127.40 H131.00" stroke="#e01010" stroke-width="0.75"/><path d="M106.85 135.19 H131.00" stroke="#e8e800" stroke-width="0.75"/><path d="M106.85 142.98 H131.00" stroke="#00d800" stroke-width="0.75"/><path d="M106.85 150.77 H131.00" stroke="#00d0d0" stroke-width="0.75"/><path d="M106.85 158.56 H131.00" stroke="#1010f0" stroke-width="0.75"/><path d="M106.85 166.35 H131.00" stroke="#e000e0" stroke-width="0.75"/><path d="M106.85 174.14 H131.00" stroke="#b0b0b0" stroke-width="0.75"/><path d="M106.85 181.93 H131.00" stroke="#8c8c8c" stroke-width="0.75"/><path d="M106.85 189.72 H131.00" stroke="#d0d0d0" stroke-width="0.75"/><path d="M145.80 127.40 V189.72" stroke="#a0a0a0" stroke-width="0.85"/><path d="M153.59 127.40 V189.72" stroke="#949494" stroke-width="0.85" stroke-dasharray="0.8 1.4"/><path d="M161.38 127.40 V189.72" stroke="#949494" stroke-width="0.85" stroke-dasharray="1.5 1"/><path d="M169.17 127.40 V189.72" stroke="#949494" stroke-width="0.85" stroke-dasharray="2 1.2"/><path d="M176.96 127.40 V189.72" stroke="#7a2222" stroke-width="0.8" stroke-dasharray="1 1.2"/><path d="M184.75 127.40 V189.72" stroke="#b8b8b8" stroke-width="0.85" stroke-dasharray="2.5 1.5"/><path d="M192.54 127.40 V189.72" stroke="#b8b8b8" stroke-width="0.85" stroke-dasharray="5 2"/><path d="M200.33 127.40 V189.72" stroke="#b8b8b8" stroke-width="0.85" stroke-dasharray="4 1.2 0.8 1.2"/><path d="M208.12 127.40 V189.72" stroke="#b8b8b8" stroke-width="0.85" stroke-dasharray="3 0.6"/><path d="M215.91 127.40 V189.72" stroke="#b8b8b8" stroke-width="0.85" stroke-dasharray="4 1.5"/><path d="M223.70 127.40 V189.72" stroke="#b8b8b8" stroke-width="0.85" stroke-dasharray="6 0.6"/><path d="M231.49 127.40 V189.72" stroke="#b8b8b8" stroke-width="0.85" stroke-dasharray="3.5 1.5"/><path d="M239.28 127.40 V189.72" stroke="#b8b8b8" stroke-width="0.85" stroke-dasharray="4 4"/><path d="M247.07 127.40 V189.72" stroke="#b8b8b8" stroke-width="0.85" stroke-dasharray="5 0.6"/><path d="M254.86 127.40 V189.72" stroke="#b8b8b8" stroke-width="0.85" stroke-dasharray="8 0.8 0.8 0.8"/><path d="M262.65 127.40 V189.72" stroke="#a0a0a0" stroke-width="0.85" stroke-dasharray="7 2.5"/><path d="M270.44 127.40 V189.72" stroke="#b8b8b8" stroke-width="0.85" stroke-dasharray="4 1.5"/><path d="M278.23 127.40 V189.72" stroke="#b8b8b8" stroke-width="0.85" stroke-dasharray="4 1.2 1 1.2"/><path d="M286.02 127.40 V189.72" stroke="#b8b8b8" stroke-width="0.85" stroke-dasharray="4 3.5"/><rect x="174.26" y="124.70" width="5.4" height="5.4" fill="#dc143c"/><rect x="174.26" y="187.02" width="5.4" height="5.4" fill="#1010d0"/><path d="M294.10 142.98 A15.7 15.7 0 0 1 325.50 142.98" fill="none" stroke="#c4c4c4" stroke-width="0.9"/><path d="M301.95 142.98 A7.85 7.85 0 0 1 317.65 142.98" fill="none" stroke="#c4c4c4" stroke-width="0.9"/><path d="M333.00 142.98 A15.7 15.7 0 0 1 364.40 142.98" fill="none" stroke="#c4c4c4" stroke-width="0.9" stroke-dasharray="0.5 1.6"/><path d="M340.85 142.98 A7.85 7.85 0 0 1 356.55 142.98" fill="none" stroke="#c4c4c4" stroke-width="0.9" stroke-dasharray="0.5 1.6"/><path d="M294.10 166.35 A15.7 15.7 0 0 1 325.50 166.35" fill="none" stroke="#c4c4c4" stroke-width="0.9" stroke-dasharray="3 1.6"/><path d="M301.95 166.35 A7.85 7.85 0 0 1 317.65 166.35" fill="none" stroke="#c4c4c4" stroke-width="0.9" stroke-dasharray="3 1.6"/><path d="M333.00 166.35 A15.7 15.7 0 0 1 364.40 166.35" fill="none" stroke="#c4c4c4" stroke-width="0.9" stroke-dasharray="3 1.2 0.6 1.2"/><path d="M340.85 166.35 A7.85 7.85 0 0 1 356.55 166.35" fill="none" stroke="#c4c4c4" stroke-width="0.9" stroke-dasharray="3 1.2 0.6 1.2"/><path d="M294.10 189.72 A15.7 15.7 0 0 1 325.50 189.72" fill="none" stroke="#c4c4c4" stroke-width="0.9" stroke-dasharray="2.4 1 0.6 1"/><path d="M301.95 189.72 A7.85 7.85 0 0 1 317.65 189.72" fill="none" stroke="#c4c4c4" stroke-width="0.9" stroke-dasharray="2.4 1 0.6 1"/><path d="M333.00 189.72 A15.7 15.7 0 0 1 364.40 189.72" fill="none" stroke="#c4c4c4" stroke-width="0.9" stroke-dasharray="12 2"/><path d="M340.85 189.72 A7.85 7.85 0 0 1 356.55 189.72" fill="none" stroke="#c4c4c4" stroke-width="0.9" stroke-dasharray="9 2"/><g transform="translate(106.75 205.20)"><rect x="0" y="0" width="24.3" height="24.3" fill="url(#h_grid)"/><rect x="0.3" y="0.3" width="23.7" height="23.7" fill="none" stroke="#d8d8d8" stroke-width="0.8"/></g><g transform="translate(137.91 205.20)"><rect x="0" y="0" width="24.3" height="24.3" fill="url(#h_diag)"/><rect x="0.3" y="0.3" width="23.7" height="23.7" fill="none" stroke="#d8d8d8" stroke-width="0.8"/></g><g transform="translate(169.07 205.20)"><rect x="0" y="0" width="24.3" height="24.3" fill="url(#h_brick)"/><rect x="0.3" y="0.3" width="23.7" height="23.7" fill="none" stroke="#d8d8d8" stroke-width="0.8"/></g><g transform="translate(200.23 205.20)"><rect x="0" y="0" width="24.3" height="24.3" fill="url(#h_brick2)"/><rect x="0.3" y="0.3" width="23.7" height="23.7" fill="none" stroke="#d8d8d8" stroke-width="0.8"/></g><g transform="translate(231.39 205.20)"><rect x="0" y="0" width="24.3" height="24.3" fill="url(#h_brick3)"/><rect x="0.3" y="0.3" width="23.7" height="23.7" fill="none" stroke="#d8d8d8" stroke-width="0.8"/></g><g transform="translate(262.55 205.20)"><rect x="0" y="0" width="24.3" height="24.3" fill="#000"/><path d="M0 0.9 H24.3" stroke="#e4e4e4" stroke-width="2"/><path d="M0 0.9 H24.3" stroke="#3a3a3a" stroke-width="0.5"/><path d="M0 7.6 H24.3" stroke="#e4e4e4" stroke-width="2"/><path d="M0 7.6 H24.3" stroke="#3a3a3a" stroke-width="0.5"/><path d="M0 14.2 H24.3" stroke="#e4e4e4" stroke-width="2"/><path d="M0 14.2 H24.3" stroke="#3a3a3a" stroke-width="0.5"/><path d="M0 20.9 H24.3" stroke="#e4e4e4" stroke-width="2"/><path d="M0 20.9 H24.3" stroke="#3a3a3a" stroke-width="0.5"/><path d="M4.2 0.9 V7.6" stroke="#e4e4e4" stroke-width="1.9"/><path d="M4.2 1.9 V6.6" stroke="#3a3a3a" stroke-width="0.45"/><path d="M13.8 0.9 V7.6" stroke="#e4e4e4" stroke-width="1.9"/><path d="M13.8 1.9 V6.6" stroke="#3a3a3a" stroke-width="0.45"/><path d="M18.8 7.6 V14.2" stroke="#e4e4e4" stroke-width="1.9"/><path d="M18.8 8.6 V13.2" stroke="#3a3a3a" stroke-width="0.45"/><path d="M4.2 14.2 V20.9" stroke="#e4e4e4" stroke-width="1.9"/><path d="M4.2 15.2 V19.9" stroke="#3a3a3a" stroke-width="0.45"/><path d="M13.8 14.2 V20.9" stroke="#e4e4e4" stroke-width="1.9"/><path d="M13.8 15.2 V19.9" stroke="#3a3a3a" stroke-width="0.45"/><path d="M18.8 20.9 V24.3" stroke="#e4e4e4" stroke-width="1.9"/><path d="M18.8 21.9 V23.3" stroke="#3a3a3a" stroke-width="0.45"/><rect x="0.3" y="0.3" width="23.7" height="23.7" fill="none" stroke="#d8d8d8" stroke-width="0.8"/></g><g transform="translate(106.75 236.36)"><rect x="0" y="0" width="24.3" height="24.3" fill="url(#h_dots)"/><rect x="0.3" y="0.3" width="23.7" height="23.7" fill="none" stroke="#d8d8d8" stroke-width="0.8"/></g><g transform="translate(137.91 236.36)"><rect x="0" y="0" width="24.3" height="24.3" fill="url(#h_diag)"/><rect x="0.3" y="0.3" width="23.7" height="23.7" fill="none" stroke="#d8d8d8" stroke-width="0.8"/></g><g transform="translate(169.07 236.36)"><rect x="0" y="0" width="24.3" height="24.3" fill="#000"/><path d="M0.50 1.21 h3.05 M0.50 2.92 h3.05 M4.55 5.26 h3.05 M4.55 6.97 h3.05 M5.26 0.50 v3.05 M6.97 0.50 v3.05 M1.21 4.55 v3.05 M2.92 4.55 v3.05 M0.50 9.31 h3.05 M0.50 11.02 h3.05 M4.55 13.36 h3.05 M4.55 15.07 h3.05 M5.26 8.60 v3.05 M6.97 8.60 v3.05 M1.21 12.65 v3.05 M2.92 12.65 v3.05 M0.50 17.41 h3.05 M0.50 19.12 h3.05 M4.55 21.46 h3.05 M4.55 23.17 h3.05 M5.26 16.70 v3.05 M6.97 16.70 v3.05 M1.21 20.75 v3.05 M2.92 20.75 v3.05 M8.60 1.21 h3.05 M8.60 2.92 h3.05 M12.65 5.26 h3.05 M12.65 6.97 h3.05 M13.36 0.50 v3.05 M15.07 0.50 v3.05 M9.31 4.55 v3.05 M11.02 4.55 v3.05 M8.60 9.31 h3.05 M8.60 11.02 h3.05 M12.65 13.36 h3.05 M12.65 15.07 h3.05 M13.36 8.60 v3.05 M15.07 8.60 v3.05 M9.31 12.65 v3.05 M11.02 12.65 v3.05 M8.60 17.41 h3.05 M8.60 19.12 h3.05 M12.65 21.46 h3.05 M12.65 23.17 h3.05 M13.36 16.70 v3.05 M15.07 16.70 v3.05 M9.31 20.75 v3.05 M11.02 20.75 v3.05 M16.70 1.21 h3.05 M16.70 2.92 h3.05 M20.75 5.26 h3.05 M20.75 6.97 h3.05 M21.46 0.50 v3.05 M23.17 0.50 v3.05 M17.41 4.55 v3.05 M19.12 4.55 v3.05 M16.70 9.31 h3.05 M16.70 11.02 h3.05 M20.75 13.36 h3.05 M20.75 15.07 h3.05 M21.46 8.60 v3.05 M23.17 8.60 v3.05 M17.41 12.65 v3.05 M19.12 12.65 v3.05 M16.70 17.41 h3.05 M16.70 19.12 h3.05 M20.75 21.46 h3.05 M20.75 23.17 h3.05 M21.46 16.70 v3.05 M23.17 16.70 v3.05 M17.41 20.75 v3.05 M19.12 20.75 v3.05 " stroke="#f0f0f0" stroke-width="0.8" fill="none"/><rect x="0.3" y="0.3" width="23.7" height="23.7" fill="none" stroke="#d8d8d8" stroke-width="0.8"/></g><g transform="translate(200.23 236.36)"><rect x="0" y="0" width="24.3" height="24.3" fill="#000"/><path d="M3.41 1.73 L0.46 2.44 M1.97 0.46 L1.89 3.71 M0.63 1.23 L3.24 2.94 M0.87 6.06 L3.50 6.86 M0.43 5.95 L3.94 6.97 M2.83 5.53 L1.53 7.39 M3.44 9.29 L1.91 12.22 M1.70 10.22 L3.66 11.28 M2.78 9.60 L2.57 11.90 M0.06 13.65 L3.08 13.93 M1.22 11.96 L1.91 15.61 M1.67 12.12 L1.47 15.46 M1.82 17.09 L2.18 19.77 M4.00 18.41 L0.00 18.44 M3.52 17.59 L0.48 19.26 M1.03 20.95 L2.46 22.79 M2.83 20.89 L0.66 22.85 M3.02 21.20 L0.46 22.54 M5.40 2.48 L7.98 2.49 M8.15 2.06 L5.23 2.91 M8.15 2.40 L5.24 2.58 M6.48 5.37 L4.42 7.09 M4.11 5.85 L6.80 6.61 M7.22 6.03 L3.68 6.43 M4.42 9.38 L6.61 10.11 M6.53 8.99 L4.50 10.50 M5.79 8.27 L5.24 11.22 M4.08 13.80 L7.16 15.15 M4.24 13.95 L7.00 15.00 M4.56 13.64 L6.67 15.31 M5.61 17.08 L7.80 20.17 M5.56 17.73 L7.86 19.52 M8.21 17.88 L5.20 19.37 M4.45 22.11 L6.53 23.76 M6.55 22.02 L4.44 23.85 M4.79 22.00 L6.19 23.87 M8.34 0.98 L10.71 3.25 M8.93 0.73 L10.12 3.50 M11.05 1.92 L8.00 2.31 M9.16 5.89 L11.24 7.24 M11.96 6.04 L8.44 7.08 M9.30 5.67 L11.10 7.46 M8.84 9.58 L12.03 11.85 M11.97 10.12 L8.90 11.31 M10.14 9.56 L10.73 11.87 M8.18 13.62 L10.72 15.98 M8.18 13.47 L10.73 16.13 M9.86 13.50 L9.05 16.10 M8.37 18.23 L10.92 18.79 M9.99 16.67 L9.30 20.34 M10.12 17.24 L9.17 19.77 M9.34 21.77 L12.02 21.91 M10.49 20.70 L10.88 22.97 M9.47 21.08 L11.90 22.59 M13.45 -0.24 L15.05 3.21 M15.94 1.38 L12.56 1.59 M15.17 0.14 L13.33 2.83 M11.73 5.29 L15.56 5.51 M14.81 3.81 L12.49 6.99 M11.98 5.29 L15.32 5.51 M13.05 8.74 L15.20 12.11 M12.58 10.05 L15.67 10.80 M15.42 9.02 L12.83 11.83 M16.01 13.27 L12.95 15.60 M13.71 12.90 L15.25 15.97 M16.28 13.86 L12.69 15.01 M15.50 17.93 L12.56 19.28 M14.59 17.27 L13.48 19.94 M14.46 17.01 L13.61 20.20 M15.45 22.41 L11.67 22.48 M14.51 21.35 L12.61 23.54 M14.65 21.24 L12.47 23.65 M16.40 2.01 L19.83 2.94 M16.48 2.32 L19.75 2.63 M18.04 1.17 L18.19 3.78 M19.16 4.24 L17.80 7.85 M17.71 5.25 L19.25 6.85 M17.48 4.66 L19.48 7.43 M19.40 9.14 L16.16 10.13 M17.44 7.77 L18.13 11.51 M16.90 8.18 L18.66 11.09 M19.35 12.95 L16.20 15.15 M19.12 13.52 L16.43 14.58 M18.14 12.72 L17.42 15.39 M19.32 17.28 L16.07 19.11 M18.89 16.65 L16.49 19.74 M16.88 17.24 L18.50 19.15 M16.98 21.02 L19.28 22.85 M18.73 20.51 L17.54 23.36 M17.11 20.38 L19.15 23.49 M21.83 1.67 L24.02 2.20 M23.97 1.49 L21.88 2.38 M23.91 0.65 L21.94 3.21 M20.76 6.38 L23.20 6.53 M21.82 5.35 L22.14 7.57 M23.11 5.79 L20.85 7.13 M22.34 8.09 L21.15 10.85 M22.42 7.92 L21.08 11.02 M23.36 8.35 L20.13 10.58 M22.41 12.47 L22.61 14.99 M20.98 13.68 L24.03 13.78 M23.29 12.74 L21.72 14.72 M22.84 16.71 L21.02 19.26 M22.56 16.32 L21.30 19.65 M21.34 16.27 L22.53 19.70 M24.53 21.30 L21.11 22.04 M21.43 21.07 L24.20 22.27 M23.56 19.90 L22.08 23.44 " stroke="#f4f4f4" stroke-width="0.8" fill="none"/><rect x="0.3" y="0.3" width="23.7" height="23.7" fill="none" stroke="#d8d8d8" stroke-width="0.8"/></g><g transform="translate(231.39 236.36)"><rect x="0" y="0" width="24.3" height="24.3" fill="url(#h_zig)"/><rect x="0.3" y="0.3" width="23.7" height="23.7" fill="none" stroke="#d8d8d8" stroke-width="0.8"/></g><g transform="translate(262.55 236.36)"><rect x="0" y="0" width="24.3" height="24.3" fill="url(#h_tri)"/><rect x="0.3" y="0.3" width="23.7" height="23.7" fill="none" stroke="#d8d8d8" stroke-width="0.8"/></g><rect x="107.05" y="267.82" width="23.7" height="23.7" fill="#ffffff" stroke="#b4b4b4" stroke-width="0.7"/><rect x="138.21" y="267.82" width="23.7" height="23.7" fill="#ff0000" stroke="#b4b4b4" stroke-width="0.7"/><rect x="169.37" y="267.82" width="23.7" height="23.7" fill="#ffff00" stroke="#b4b4b4" stroke-width="0.7"/><rect x="200.53" y="267.82" width="23.7" height="23.7" fill="#00ff00" stroke="#b4b4b4" stroke-width="0.7"/><rect x="231.69" y="267.82" width="23.7" height="23.7" fill="#00ffff" stroke="#b4b4b4" stroke-width="0.7"/><rect x="262.85" y="267.82" width="23.7" height="23.7" fill="#0000ff" stroke="#b4b4b4" stroke-width="0.7"/><path d="M294.0 205.3 C312.7 210.9 305.6 251.4 294.4 290.6" fill="none" stroke="#d8d8d8" stroke-width="0.95"/><path d="M294.0 205.3 C333.9 217.3 318.5 255.2 294.4 290.6" fill="none" stroke="#d8d8d8" stroke-width="0.95" stroke-dasharray="0.5 1.5"/><path d="M294.0 205.3 C352.4 222.8 329.8 258.6 294.4 290.6" fill="none" stroke="#d8d8d8" stroke-width="0.95" stroke-dasharray="3 1.6"/><path d="M294.0 205.3 C370.3 228.2 340.7 261.9 294.4 290.6" fill="none" stroke="#d8d8d8" stroke-width="0.95" stroke-dasharray="3 1.2 0.6 1.2"/><path d="M294.0 205.3 C390.1 234.1 352.8 265.5 294.4 290.6" fill="none" stroke="#d8d8d8" stroke-width="0.95" stroke-dasharray="4 1.5"/><path d="M294.0 205.3 C409.9 240.1 364.9 269.2 294.4 290.6" fill="none" stroke="#d8d8d8" stroke-width="0.95" stroke-dasharray="14 1.6"/><path d="M95.35 205.3 H117.85 M106.85 193.8 V216.3" stroke="#a00000" stroke-width="0.75"/><circle cx="106.85" cy="205.3" r="2.4" fill="none" stroke="#a00000" stroke-width="0.7"/></g></svg>
<svg style="left:421px;top:97px" width="12" height="209"><rect x="0.40" y="0.00" width="11.60" height="209.00" fill="#f0f0f0"/></svg>
<svg style="left:423px;top:184px" width="8" height="36"><rect x="0.20" y="0.00" width="7.60" height="35.20" fill="#cdcdcd"/></svg>
<svg style="left:0px;top:0px;" width="600" height="413" viewBox="0 0 600 413"><path d="M424.70 103.30 L426.60 101.30 L428.50 103.30" stroke="#3c3c3c" stroke-width="1.25" fill="none"/></svg>
<svg style="left:0px;top:0px;" width="600" height="413" viewBox="0 0 600 413"><path d="M424.70 300.60 L426.60 302.60 L428.50 300.60" stroke="#3c3c3c" stroke-width="1.25" fill="none"/></svg>
<svg style="left:61px;top:306px" width="340" height="13"><rect x="0.00" y="0.00" width="340.00" height="12.50" fill="#f0f0f0"/></svg>
<svg style="left:182px;top:307px" width="96" height="9"><rect x="0.00" y="0.20" width="95.50" height="8.60" fill="#cdcdcd"/></svg>
<svg style="left:0px;top:0px;" width="600" height="413" viewBox="0 0 600 413"><path d="M67.20 309.10 L65.20 311.00 L67.20 312.90" stroke="#3c3c3c" stroke-width="1.25" fill="none"/></svg>
<svg style="left:0px;top:0px;" width="600" height="413" viewBox="0 0 600 413"><path d="M388.60 309.10 L390.60 311.00 L388.60 312.90" stroke="#3c3c3c" stroke-width="1.25" fill="none"/></svg>
<div class="t" style="left:406.5px;top:308px;font-size:7px;color:#222;transform:scaleX(0.896);">10 &lt; 100</div>
<svg style="left:49px;top:318px" width="12" height="69"><rect x="0.00" y="0.50" width="12.00" height="68.00" fill="#f0f0f0"/></svg>
<div style="left:49px;top:317.6px;width:12.2px;height:37px;background:#fcfcfc;border:0.5px solid #dcdcdc;border-right:none"></div>
<svg style="left:60px;top:354px" width="1" height="33"><rect x="0.40" y="0.50" width="0.60" height="32.00" fill="#d9d9d9"/></svg>
<div class="t" style="left:51.3px;top:345px;font-size:7px;color:#111;transform:rotate(-90deg) scaleX(0.93);transform-origin:0 0;">Prop...</div>
<div class="t" style="left:51.3px;top:379.5px;font-size:7px;color:#111;transform:rotate(-90deg) scaleX(0.93);transform-origin:0 0;">Com...</div>
<svg style="left:61px;top:320px" width="372" height="11"><rect x="0.50" y="0.30" width="371.00" height="9.90" fill="#dadada"/></svg>
<div class="t" style="left:63.2px;top:321.6px;font-size:7.3px;color:#111;transform:scaleX(0.863);">Property Editor</div>
<svg style="left:414px;top:321px;" width="19" height="8" viewBox="-0.3 0 19 8"><path d="M1.8 3.2 h3 v3 h-3 Z M3 3.2 V1.9 h3 v3 H4.8" stroke="#222" stroke-width="0.85" fill="none"/><path d="M10.5 1.8 L14.6 6.2 M14.6 1.8 L10.5 6.2" stroke="#222" stroke-width="0.9"/></svg>
<div style="left:0;top:0;width:600px;height:386.6px;overflow:hidden">
<div style="left:61.5px;top:331.5px;width:359.5px;height:55px;background:#f0f0f0;border:0.6px solid #c9c9c9;border-bottom:none"></div>
<div class="t" style="left:66.4px;top:339.6px;font-size:7.2px;color:#111;transform:scaleX(0.823);">Selection:</div>
<svg style="left:97px;top:336px" width="318" height="13"><rect x="0.30" y="1.10" width="317.40" height="11.00" fill="#e2e2e2" stroke="#b0b0b0" stroke-width="0.6"/></svg>
<div class="t" style="left:98.7px;top:339.6px;font-size:7.2px;color:#111;transform:scaleX(0.841);">Line (1)</div>
<svg style="left:407px;top:341px;" width="6" height="4" viewBox="0 0 6 4"><path d="M0.6 0.6 H5.4 L3 3.4 Z" fill="#222"/></svg>
<div style="left:66.8px;top:356.3px;width:348.5px;height:32px;border:0.6px solid #dcdcdc;border-bottom:none"></div>
<div style="left:70px;top:351px;width:54px;height:9px;background:#f0f0f0"></div>
<div class="t" style="left:71.2px;top:352.1px;font-size:7.2px;color:#111;transform:scaleX(0.845);">General Properties</div>
<div class="t" style="left:95.6px;top:366.8px;font-size:7.2px;color:#111;transform:scaleX(0.901);">Layer:</div>
<svg style="left:117px;top:363px" width="277" height="13"><rect x="0.80" y="0.60" width="275.20" height="11.90" fill="#e2e2e2" stroke="#b0b0b0" stroke-width="0.6"/></svg>
<div style="left:120.3px;top:366.4px;width:18.4px;height:6.6px;background:#fff;border:0.8px solid #3a3a3a;border-radius:0.6px"></div>
<div class="t" style="left:140.4px;top:366.8px;font-size:7.2px;color:#111;transform:scaleX(0.849);">styles</div>
<svg style="left:385px;top:367px;" width="7" height="5" viewBox="-0.5 -0.5 7 5"><path d="M0.6 0.6 H5.4 L3 3.4 Z" fill="#222"/></svg>
<svg style="left:397px;top:363px" width="13" height="13"><rect x="0.30" y="0.90" width="11.90" height="11.20" fill="#e4e4e4" stroke="#b4b4b4" stroke-width="0.6"/></svg>
<svg style="left:399px;top:366px;" width="9" height="7" viewBox="0 0 9 7"><path d="M0.8 1.2 H8 M0.8 3.5 H8 M0.8 5.8 H8" stroke="#8a8a8a" stroke-width="0.9"/></svg>
<div class="t" style="left:97.4px;top:381.2px;font-size:7.2px;color:#111;transform:scaleX(0.844);">Color:</div>
<svg style="left:117px;top:377px" width="293" height="14"><rect x="0.80" y="0.90" width="291.40" height="11.90" fill="#e2e2e2" stroke="#b0b0b0" stroke-width="0.6"/></svg>
<div style="left:120.3px;top:380.8px;width:18.4px;height:6.6px;background:#fff;border:0.8px solid #3a3a3a;border-radius:0.6px"></div>
<div class="t" style="left:140.4px;top:381.2px;font-size:7.2px;color:#111;transform:scaleX(0.775);">By Layer</div>
<svg style="left:402px;top:381px;" width="6" height="5" viewBox="0 -0.5 6 5"><path d="M0.6 0.6 H5.4 L3 3.4 Z" fill="#222"/></svg>
</div>
<svg style="left:421px;top:331px" width="12" height="56"><rect x="0.00" y="0.50" width="11.50" height="55.00" fill="#f0f0f0"/></svg>
<svg style="left:422px;top:341px" width="9" height="11"><rect x="0.50" y="0.50" width="8.50" height="9.80" fill="#cdcdcd"/></svg>
<svg style="left:0px;top:0px;" width="600" height="413" viewBox="0 0 600 413"><path d="M424.70 337.60 L426.60 335.60 L428.50 337.60" stroke="#3c3c3c" stroke-width="1.25" fill="none"/></svg>
<svg style="left:0px;top:0px;" width="600" height="413" viewBox="0 0 600 413"><path d="M424.70 380.00 L426.60 382.00 L428.50 380.00" stroke="#3c3c3c" stroke-width="1.25" fill="none"/></svg>
<svg style="left:433px;top:71px" width="148" height="12"><rect x="0.80" y="0.50" width="147.00" height="10.80" fill="#dadada"/></svg>
<div class="t" style="left:436.3px;top:73.5px;font-size:7.3px;color:#111;transform:scaleX(0.838);">Layer List</div>
<svg style="left:562px;top:72px;" width="19" height="9" viewBox="-0.8 -0.8 19 9"><path d="M1.8 3.2 h3 v3 h-3 Z M3 3.2 V1.9 h3 v3 H4.8" stroke="#222" stroke-width="0.85" fill="none"/><path d="M10.5 1.8 L14.6 6.2 M14.6 1.8 L10.5 6.2" stroke="#222" stroke-width="0.9"/></svg>
<svg style="left:434px;top:83px" width="28" height="13"><rect x="0.90" y="1.10" width="26.40" height="11.30" fill="#e4e4e4" stroke="#c6c6c6" stroke-width="0.6"/></svg>
<svg style="left:462px;top:83px" width="30" height="13"><rect x="1.10" y="1.10" width="28.60" height="11.30" fill="#e4e4e4" stroke="#c6c6c6" stroke-width="0.6"/></svg>
<svg style="left:493px;top:83px" width="29" height="13"><rect x="0.60" y="1.10" width="27.70" height="11.30" fill="#e4e4e4" stroke="#c6c6c6" stroke-width="0.6"/></svg>
<svg style="left:522px;top:83px" width="29" height="13"><rect x="1.20" y="1.10" width="27.50" height="11.30" fill="#cbcbcb" stroke="#b4b4b4" stroke-width="0.6"/></svg>
<svg style="left:552px;top:83px" width="29" height="13"><rect x="0.60" y="1.10" width="27.30" height="11.30" fill="#e4e4e4" stroke="#c6c6c6" stroke-width="0.6"/></svg>
<svg style="left:434px;top:83px;" width="28" height="13" viewBox="-0.6 -0.6 28 13"><g transform="translate(13.4 6) scale(1.0)"><path d="M-4.3 0.2 Q-2.6 -3.2 0 -3.2 Q2.6 -3.2 4.3 0.2 Q2.4 3 0 3 Q-2.4 3 -4.3 0.2 Z" fill="#111"/><ellipse cx="0" cy="0.3" rx="1.7" ry="1.3" fill="#eee" fill-opacity="0.45"/><circle cx="0" cy="0.4" r="0.75" fill="#111"/></g></svg>
<svg style="left:463px;top:83px;" width="29" height="13" viewBox="-0.7 -0.6 29 13"><g transform="translate(13.3 6) scale(1.0)"><path d="M-4.3 0.2 Q-2.6 -3.2 0 -3.2 Q2.6 -3.2 4.3 0.2 Q2.4 3 0 3 Q-2.4 3 -4.3 0.2 Z" fill="#a4a4a4"/><ellipse cx="0" cy="0.3" rx="1.7" ry="1.3" fill="#e4e4e4" fill-opacity="0.45"/><circle cx="0" cy="0.4" r="0.75" fill="#a4a4a4"/></g></svg>
<svg style="left:493px;top:83px;" width="29" height="13" viewBox="-0.5 -0.6 29 13"><path d="M13.6 2.8 V9.4 M10.3 6.1 H16.9" stroke="#e01020" stroke-width="1.8"/></svg>
<svg style="left:523px;top:83px;" width="28" height="13" viewBox="0 -0.6 28 13"><path d="M10.2 6 H17.6" stroke="#8e8e8e" stroke-width="1.8"/></svg>
<svg style="left:552px;top:83px;" width="29" height="13" viewBox="-0.6 -0.6 29 13"><path d="M11.2 9.2 L16.2 2.6 L17.9 3.9 L12.9 10.4 Z" fill="#e9a23a"/><path d="M16.2 2.6 L17.9 3.9 L18.6 2.4 L17.5 1.6 Z" fill="#d8503a"/><path d="M11.2 9.2 L12.9 10.4 L10.6 11.2 Z" fill="#444"/></svg>
<div style="left:433.8px;top:96px;width:146.99999999999994px;height:91.5px;background:#fff;border:0.6px solid #d4d4d4;border-top:none"></div>
<svg style="left:434px;top:96px" width="147" height="11"><rect x="0.30" y="0.00" width="146.00" height="10.60" fill="#d9d9d9"/></svg>
<div style="left:436px;top:99px;width:9px;height:5px;background:#b9d9f7;border:0.75px solid #3a5f8a;border-radius:0.8px"></div>
<div class="t" style="left:448.8px;top:99px;font-size:8px;color:#111;transform:scaleX(0.808);">0</div>
<svg style="left:555px;top:97px;" width="12" height="9" viewBox="-0.5 -0.2 12 9"><g transform="translate(5.5 4.1) scale(0.98)"><path d="M-4.3 0.2 Q-2.6 -3.2 0 -3.2 Q2.6 -3.2 4.3 0.2 Q2.4 3 0 3 Q-2.4 3 -4.3 0.2 Z" fill="#274a78"/><ellipse cx="0" cy="0.3" rx="1.7" ry="1.3" fill="#cfe0ff" fill-opacity="0.45"/><circle cx="0" cy="0.4" r="0.75" fill="#274a78"/></g></svg>
<svg style="left:570px;top:96px;" width="8" height="11" viewBox="0 -0.2 8 11"><path d="M2.3 5 V3.2 Q2.3 1.2 4 1.2 Q5.7 1.2 5.7 3.2 V5" stroke="#8fb4da" stroke-width="1" fill="none"/><rect x="1.3" y="4.6" width="5.4" height="4.4" rx="0.5" fill="#8fb4da"/></svg>
<div style="left:436px;top:109px;width:9px;height:5px;background:#fff;border:0.75px solid #505050;border-radius:0.8px"></div>
<div class="t" style="left:448.8px;top:109px;font-size:8px;color:#111;transform:scaleX(0.834);">colors</div>
<svg style="left:555px;top:107px;" width="12" height="9" viewBox="-0.5 -0.45 12 9"><g transform="translate(5.5 4.1) scale(0.98)"><path d="M-4.3 0.2 Q-2.6 -3.2 0 -3.2 Q2.6 -3.2 4.3 0.2 Q2.4 3 0 3 Q-2.4 3 -4.3 0.2 Z" fill="#111"/><ellipse cx="0" cy="0.3" rx="1.7" ry="1.3" fill="#eee" fill-opacity="0.45"/><circle cx="0" cy="0.4" r="0.75" fill="#111"/></g></svg>
<svg style="left:570px;top:106px;" width="8" height="11" viewBox="0 -0.45 8 11"><path d="M2.3 5 V3.2 Q2.3 1.2 4 1.2 Q5.7 1.2 5.7 3.2 V5" stroke="#cbcbcb" stroke-width="1" fill="none"/><rect x="1.3" y="4.6" width="5.4" height="4.4" rx="0.5" fill="#cbcbcb"/></svg>
<div style="left:436px;top:119px;width:9px;height:5px;background:#fff;border:0.75px solid #505050;border-radius:0.8px"></div>
<div class="t" style="left:448.8px;top:119px;font-size:8px;color:#111;transform:scaleX(0.848);">hatch</div>
<svg style="left:555px;top:117px;" width="12" height="9" viewBox="-0.5 -0.7 12 9"><g transform="translate(5.5 4.1) scale(0.98)"><path d="M-4.3 0.2 Q-2.6 -3.2 0 -3.2 Q2.6 -3.2 4.3 0.2 Q2.4 3 0 3 Q-2.4 3 -4.3 0.2 Z" fill="#111"/><ellipse cx="0" cy="0.3" rx="1.7" ry="1.3" fill="#eee" fill-opacity="0.45"/><circle cx="0" cy="0.4" r="0.75" fill="#111"/></g></svg>
<svg style="left:570px;top:116px;" width="8" height="11" viewBox="0 -0.7 8 11"><path d="M2.3 5 V3.2 Q2.3 1.2 4 1.2 Q5.7 1.2 5.7 3.2 V5" stroke="#cbcbcb" stroke-width="1" fill="none"/><rect x="1.3" y="4.6" width="5.4" height="4.4" rx="0.5" fill="#cbcbcb"/></svg>
<div style="left:436px;top:129px;width:9px;height:5px;background:#fff;border:0.75px solid #505050;border-radius:0.8px"></div>
<div class="t" style="left:448.8px;top:130px;font-size:8px;color:#111;transform:scaleX(0.853);">hatch_cont</div>
<svg style="left:555px;top:127px;" width="12" height="9" viewBox="-0.5 -0.95 12 9"><g transform="translate(5.5 4.1) scale(0.98)"><path d="M-4.3 0.2 Q-2.6 -3.2 0 -3.2 Q2.6 -3.2 4.3 0.2 Q2.4 3 0 3 Q-2.4 3 -4.3 0.2 Z" fill="#111"/><ellipse cx="0" cy="0.3" rx="1.7" ry="1.3" fill="#eee" fill-opacity="0.45"/><circle cx="0" cy="0.4" r="0.75" fill="#111"/></g></svg>
<svg style="left:570px;top:126px;" width="8" height="11" viewBox="0 -0.95 8 11"><path d="M2.3 5 V3.2 Q2.3 1.2 4 1.2 Q5.7 1.2 5.7 3.2 V5" stroke="#cbcbcb" stroke-width="1" fill="none"/><rect x="1.3" y="4.6" width="5.4" height="4.4" rx="0.5" fill="#cbcbcb"/></svg>
<div style="left:436px;top:140px;width:9px;height:5px;background:#fff;border:0.75px solid #505050;border-radius:0.8px"></div>
<div class="t" style="left:448.8px;top:140px;font-size:8px;color:#111;transform:scaleX(0.772);">styles</div>
<svg style="left:555px;top:138px;" width="12" height="9" viewBox="-0.5 -0.2 12 9"><g transform="translate(5.5 4.1) scale(0.98)"><path d="M-4.3 0.2 Q-2.6 -3.2 0 -3.2 Q2.6 -3.2 4.3 0.2 Q2.4 3 0 3 Q-2.4 3 -4.3 0.2 Z" fill="#111"/><ellipse cx="0" cy="0.3" rx="1.7" ry="1.3" fill="#eee" fill-opacity="0.45"/><circle cx="0" cy="0.4" r="0.75" fill="#111"/></g></svg>
<svg style="left:570px;top:137px;" width="8" height="11" viewBox="0 -0.2 8 11"><path d="M2.3 5 V3.2 Q2.3 1.2 4 1.2 Q5.7 1.2 5.7 3.2 V5" stroke="#cbcbcb" stroke-width="1" fill="none"/><rect x="1.3" y="4.6" width="5.4" height="4.4" rx="0.5" fill="#cbcbcb"/></svg>
<div style="left:436px;top:150px;width:9px;height:5px;background:#fff;border:0.75px solid #505050;border-radius:0.8px"></div>
<div class="t" style="left:448.8px;top:150px;font-size:8px;color:#111;transform:scaleX(0.890);">widths</div>
<svg style="left:555px;top:148px;" width="12" height="9" viewBox="-0.5 -0.45 12 9"><g transform="translate(5.5 4.1) scale(0.98)"><path d="M-4.3 0.2 Q-2.6 -3.2 0 -3.2 Q2.6 -3.2 4.3 0.2 Q2.4 3 0 3 Q-2.4 3 -4.3 0.2 Z" fill="#111"/><ellipse cx="0" cy="0.3" rx="1.7" ry="1.3" fill="#eee" fill-opacity="0.45"/><circle cx="0" cy="0.4" r="0.75" fill="#111"/></g></svg>
<svg style="left:570px;top:147px;" width="8" height="11" viewBox="0 -0.45 8 11"><path d="M2.3 5 V3.2 Q2.3 1.2 4 1.2 Q5.7 1.2 5.7 3.2 V5" stroke="#cbcbcb" stroke-width="1" fill="none"/><rect x="1.3" y="4.6" width="5.4" height="4.4" rx="0.5" fill="#cbcbcb"/></svg>
<svg style="left:433px;top:191px" width="148" height="11"><rect x="0.80" y="0.40" width="147.00" height="10.40" fill="#dadada"/></svg>
<div class="t" style="left:436.3px;top:193.8px;font-size:7.3px;color:#111;transform:scaleX(0.826);">Trial</div>
<svg style="left:433px;top:203px" width="148" height="184"><rect x="1.10" y="0.50" width="146.40" height="182.50" fill="#fff" stroke="#d4d4d4" stroke-width="0.6"/></svg>
<div class="t" style="left:436.3px;top:207.2px;font-size:7.1px;color:#111;transform:scaleX(0.871);">The following add-ons are running in trial mode:</div>
<svg style="left:436px;top:221px" width="132" height="89"><rect x="0.50" y="0.00" width="131.50" height="89.00" fill="#dcdcdc"/></svg>
<div class="t b" style="left:440px;top:224.6px;font-size:7.4px;color:#222;transform:scaleX(0.838);">QCAD Pro</div>
<svg style="left:438px;top:236px" width="34" height="13"><rect x="0.00" y="0.00" width="33.40" height="12.20" fill="#99cc33"/></svg>
<div class="t b" style="left:440.2px;top:238.8px;font-size:7.1px;color:rgba(255,255,255,0.88);transform:scaleX(0.916);-webkit-text-stroke:0;">Active</div>
<svg style="left:472px;top:236px" width="27" height="13"><rect x="0.80" y="0.00" width="26.20" height="12.20" fill="#2e9bf5"/></svg>
<div class="t b" style="left:475px;top:238.8px;font-size:7.1px;color:rgba(255,255,255,0.88);transform:scaleX(0.946);-webkit-text-stroke:0;">Info</div>
<svg style="left:500px;top:236px" width="26" height="13"><rect x="0.30" y="0.00" width="25.50" height="12.20" fill="#2e9bf5"/></svg>
<div class="t b" style="left:502.5px;top:238.8px;font-size:7.1px;color:rgba(255,255,255,0.88);transform:scaleX(0.858);-webkit-text-stroke:0;">Buy</div>
<svg style="left:526px;top:236px" width="41" height="13"><rect x="0.80" y="0.00" width="39.70" height="12.20" fill="#2e9bf5"/></svg>
<div class="t b" style="left:529px;top:238.8px;font-size:7.1px;color:rgba(255,255,255,0.88);transform:scaleX(0.949);-webkit-text-stroke:0;">Remove</div>
<div class="t" style="left:440px;top:254px;font-size:6.3px;color:#222;transform:scaleX(0.969);">DWG support (Teigha®), enhanced DXF</div>
<div class="t" style="left:440px;top:262px;font-size:6.3px;color:#222;transform:scaleX(0.990);">support (Teigha®), SVG export, block</div>
<div class="t" style="left:440px;top:270px;font-size:6.3px;color:#222;transform:scaleX(0.991);">attributes, context menu, splines from fit</div>
<div class="t" style="left:440px;top:278px;font-size:6.3px;color:#222;transform:scaleX(0.972);">points, polyline tools, multi page printing,</div>
<div class="t" style="left:440px;top:286px;font-size:6.3px;color:#222;transform:scaleX(0.989);">24bit colors, complex line types, paste along</div>
<div class="t" style="left:440px;top:294px;font-size:6.3px;color:#222;transform:scaleX(0.960);">entity, command line tools, <span style="color:#3a9cf2">and more...</span></div>
<div class="t" style="left:436.3px;top:326.6px;font-size:7.1px;color:#111;transform:scaleX(0.889);">If you would like to use one of these add-ons</div>
<div class="t" style="left:436.3px;top:334.8px;font-size:7.1px;color:#111;transform:scaleX(0.886);">productively, please purchase the full version</div>
<div class="t" style="left:436.3px;top:343px;font-size:7.1px;color:#111;transform:scaleX(0.864);">for a small license fee from our <span style="color:#2e9bf5">Online Shop</span>.</div>
<div class="t" style="left:436.3px;top:357.3px;font-size:7.1px;color:#111;transform:scaleX(0.888);">With your purchase, you are supporting the</div>
<div class="t" style="left:436.3px;top:365.5px;font-size:7.1px;color:#111;transform:scaleX(0.887);">future development of QCAD.</div>
<div class="t" style="left:436.3px;top:379.8px;font-size:7.1px;color:#111;transform:scaleX(0.865);">Thank you for using QCAD!</div>
<svg style="left:571px;top:203px" width="10" height="183"><rect x="0.10" y="0.80" width="9.70" height="182.00" fill="#f0f0f0"/></svg>
<svg style="left:571px;top:213px" width="10" height="161"><rect x="0.10" y="0.40" width="9.70" height="160.00" fill="#cdcdcd"/></svg>
<svg style="left:0px;top:0px;" width="600" height="413" viewBox="0 0 600 413"><path d="M573.20 210.20 L575.10 208.20 L577.00 210.20" stroke="#3c3c3c" stroke-width="1.25" fill="none"/></svg>
<svg style="left:0px;top:0px;" width="600" height="413" viewBox="0 0 600 413"><path d="M573.30 380.30 L575.20 382.30 L577.10 380.30" stroke="#3c3c3c" stroke-width="1.25" fill="none"/></svg>
<div style="left:583px;top:72.5px;width:15px;height:2px;background:repeating-linear-gradient(90deg,#c8c8c8 0 1px,transparent 1px 2px);opacity:.8"></div>
<div style="left:581.6px;top:76.0px;width:16.8px;height:16px;background:linear-gradient(#8f8f8f,#d2d2d2 80%);border:0.5px solid #8a8a8a"></div>
<svg style="left:582px;top:76px;" width="17" height="17" viewBox="-0.4 -0.5 17 17"><rect x="3" y="3" width="10.6" height="9.6" fill="#fbfbfb" stroke="#c9c9c9" stroke-width="0.6"/><rect x="2.8" y="2.4" width="11" height="1.9" fill="#1a1a1a"/><path d="M6 9.5 L9.5 6.5 L11.5 8.2 L8 11 Z" fill="#f4c6c6" stroke="#c66" stroke-width="0.5"/></svg>
<svg style="left:582px;top:92px;" width="17" height="17" viewBox="-0.4 -0.7 17 17"><rect x="3" y="3" width="10.6" height="9.6" fill="#fbfbfb" stroke="#c9c9c9" stroke-width="0.6"/><rect x="2.8" y="2.4" width="11" height="1.9" fill="#1a1a1a"/><rect x="5.5" y="6.5" width="4" height="3" fill="#ecd9a0" stroke="#b9a36a" stroke-width="0.5"/><rect x="7" y="7.8" width="4" height="3" fill="#ecd9a0" stroke="#b9a36a" stroke-width="0.5"/></svg>
<svg style="left:582px;top:109px;" width="17" height="16" viewBox="-0.4 -0 17 16"><rect x="3" y="3" width="10.6" height="9.6" fill="#fbfbfb" stroke="#c9c9c9" stroke-width="0.6"/><rect x="2.8" y="2.4" width="11" height="1.9" fill="#1a1a1a"/><rect x="4.5" y="6" width="7.5" height="5" fill="#f2f5fb" stroke="#b9c6e0" stroke-width="0.5"/></svg>
<div style="left:581.6px;top:128.9px;width:16.8px;height:16px;background:linear-gradient(#8f8f8f,#d2d2d2 80%);border:0.5px solid #8a8a8a"></div>
<svg style="left:582px;top:129px;" width="17" height="17" viewBox="-0.4 -0.4 17 17"><rect x="3" y="3" width="10.6" height="9.6" fill="#fbfbfb" stroke="#c9c9c9" stroke-width="0.6"/><rect x="2.8" y="2.4" width="11" height="1.9" fill="#1a1a1a"/><path d="M4.2 6.2 h1.6 M4.2 8.3 h1.6 M4.2 10.4 h1.6" stroke="#111" stroke-width="1.3"/><path d="M6.6 6.2 H12.6 M6.6 8.3 H12.6 M6.6 10.4 H12.6" stroke="#8a8a8a" stroke-width="0.7"/></svg>
<svg style="left:582px;top:145px;" width="17" height="17" viewBox="-0.4 -0.7 17 17"><rect x="3" y="3" width="10.6" height="9.6" fill="#fbfbfb" stroke="#c9c9c9" stroke-width="0.6"/><rect x="2.8" y="2.4" width="11" height="1.9" fill="#1a1a1a"/><path d="M4.8 5.6 H11.8 L9.3 8.6 V11.4 H7.3 V8.6 Z" fill="#a9a9a9"/></svg>
<svg style="left:582px;top:162px;" width="17" height="17" viewBox="-0.4 -0.5 17 17"><rect x="3" y="3" width="10.6" height="9.6" fill="#fbfbfb" stroke="#c9c9c9" stroke-width="0.6"/><rect x="2.8" y="2.4" width="11" height="1.9" fill="#1a1a1a"/><rect x="7.5" y="6.5" width="3.8" height="4" fill="#b98a8a"/><path d="M5 6.5 V11" stroke="#c33" stroke-width="0.6"/></svg>
<div style="left:581.6px;top:181.6px;width:16.8px;height:16px;background:linear-gradient(#8f8f8f,#d2d2d2 80%);border:0.5px solid #8a8a8a"></div>
<svg style="left:582px;top:182px;" width="17" height="17" viewBox="-0.4 -0.1 17 17"><rect x="3" y="3" width="10.6" height="9.6" fill="#fbfbfb" stroke="#c9c9c9" stroke-width="0.6"/><rect x="2.8" y="2.4" width="11" height="1.9" fill="#1a1a1a"/><path d="M4.5 6 H12 M4.5 8 H12 M4.5 10 H9" stroke="#bbb" stroke-width="0.7"/></svg>
<svg style="left:582px;top:198px;" width="17" height="17" viewBox="-0.4 -0.9 17 17"><rect x="3" y="3" width="10.6" height="9.6" fill="#fbfbfb" stroke="#c9c9c9" stroke-width="0.6"/><rect x="2.8" y="2.4" width="11" height="1.9" fill="#1a1a1a"/><rect x="6" y="5.6" width="4.6" height="6" rx="0.5" fill="#fbf8f0" stroke="#cfa45a" stroke-width="0.9"/><rect x="7.2" y="5" width="2.2" height="1.2" fill="#a0a0a0"/></svg>
<svg style="left:1px;top:386px" width="598" height="26"><rect x="0.00" y="0.60" width="598.00" height="25.40" fill="#f0f0f0"/></svg>
<svg style="left:100px;top:387px" width="1" height="25"><rect x="0.00" y="0.00" width="0.70" height="25.00" fill="#fafafa"/></svg>
<svg style="left:61px;top:386px" width="360" height="1"><rect x="0.50" y="0.20" width="359.50" height="0.70" fill="#c0c0c0"/></svg>
<div class="t" style="left:2px;top:391.6px;font-size:7.1px;color:#111;transform:scaleX(0.865);">378.219,127.6286</div>
<div class="t" style="left:2px;top:404.3px;font-size:7.1px;color:#111;transform:scaleX(0.877);">@378.219,127.6286</div>
<div class="t" style="left:102px;top:391.6px;font-size:7.1px;color:#111;transform:scaleX(0.889);">399.1725&lt;18.65°</div>
<div class="t" style="left:102px;top:404.3px;font-size:7.1px;color:#111;transform:scaleX(0.894);">@399.1725&lt;18.65°</div>
<div class="t" style="left:211px;top:393px;font-size:7.1px;color:#111;transform:scaleX(0.954);">Select entity or region</div>
<div class="t" style="left:202.5px;top:401.4px;font-size:7.1px;color:#111;transform:scaleX(0.967);">Move entity or reference</div>
<svg style="left:280px;top:387px;" width="20" height="24" viewBox="0 0 20 24"><defs><radialGradient id="mg" cx="0.4" cy="0.45" r="0.7"><stop offset="0" stop-color="#ffffff"/><stop offset="0.6" stop-color="#f2f2f2"/><stop offset="1" stop-color="#b4b4b4"/></radialGradient></defs><path d="M6.5 4.2 Q5.6 2.4 6 1.2" stroke="#b0b0b0" stroke-width="0.6" fill="none"/><ellipse cx="9.6" cy="12.3" rx="6.9" ry="8.8" transform="rotate(-18 9.6 12.3)" fill="url(#mg)" stroke="#b4b4b4" stroke-width="0.6"/><path d="M3.6 10.8 Q8 8.2 14 9.2" stroke="#d4d4d4" stroke-width="0.5" fill="none"/><rect x="7.4" y="7" width="1.7" height="2.8" rx="0.7" fill="#3a58d8" transform="rotate(-18 8.2 8.4)"/></svg>
<div class="t" style="left:375.8px;top:393px;font-size:7.1px;color:#111;transform:scaleX(0.933);">Selected entities:</div>
<div class="t" style="left:375.8px;top:401.4px;font-size:7.1px;color:#111;transform:scaleX(0.939);">1 Line on Layer 'styles'.</div>
<svg style="left:590px;top:388px" width="1" height="23"><rect x="0.30" y="0.00" width="0.70" height="23.00" fill="#fafafa"/></svg>
<svg style="left:588px;top:400px;" width="11" height="11" viewBox="0 0 11 11"><path d="M9 3 h1 v1 h-1 Z M9 6 h1 v1 h-1 Z M6 6 h1 v1 h-1 Z M9 9 h1 v1 h-1 Z M6 9 h1 v1 h-1 Z M3 9 h1 v1 h-1 Z" fill="#b8b8b8"/></svg>
<div style="left:0px;top:0px;width:600px;height:1px;background:#6b6b6b"></div>
<svg style="left:0px;top:0px" width="1" height="413"><rect x="0.00" y="0.00" width="0.80" height="413.00" fill="#6a6a6a"/></svg>
<div style="left:599px;top:0px;width:1px;height:413px;background:#6a6a6a"></div>
<div style="left:0px;top:412px;width:600px;height:1px;background:#4a4a4a"></div>
</div></body></html>
